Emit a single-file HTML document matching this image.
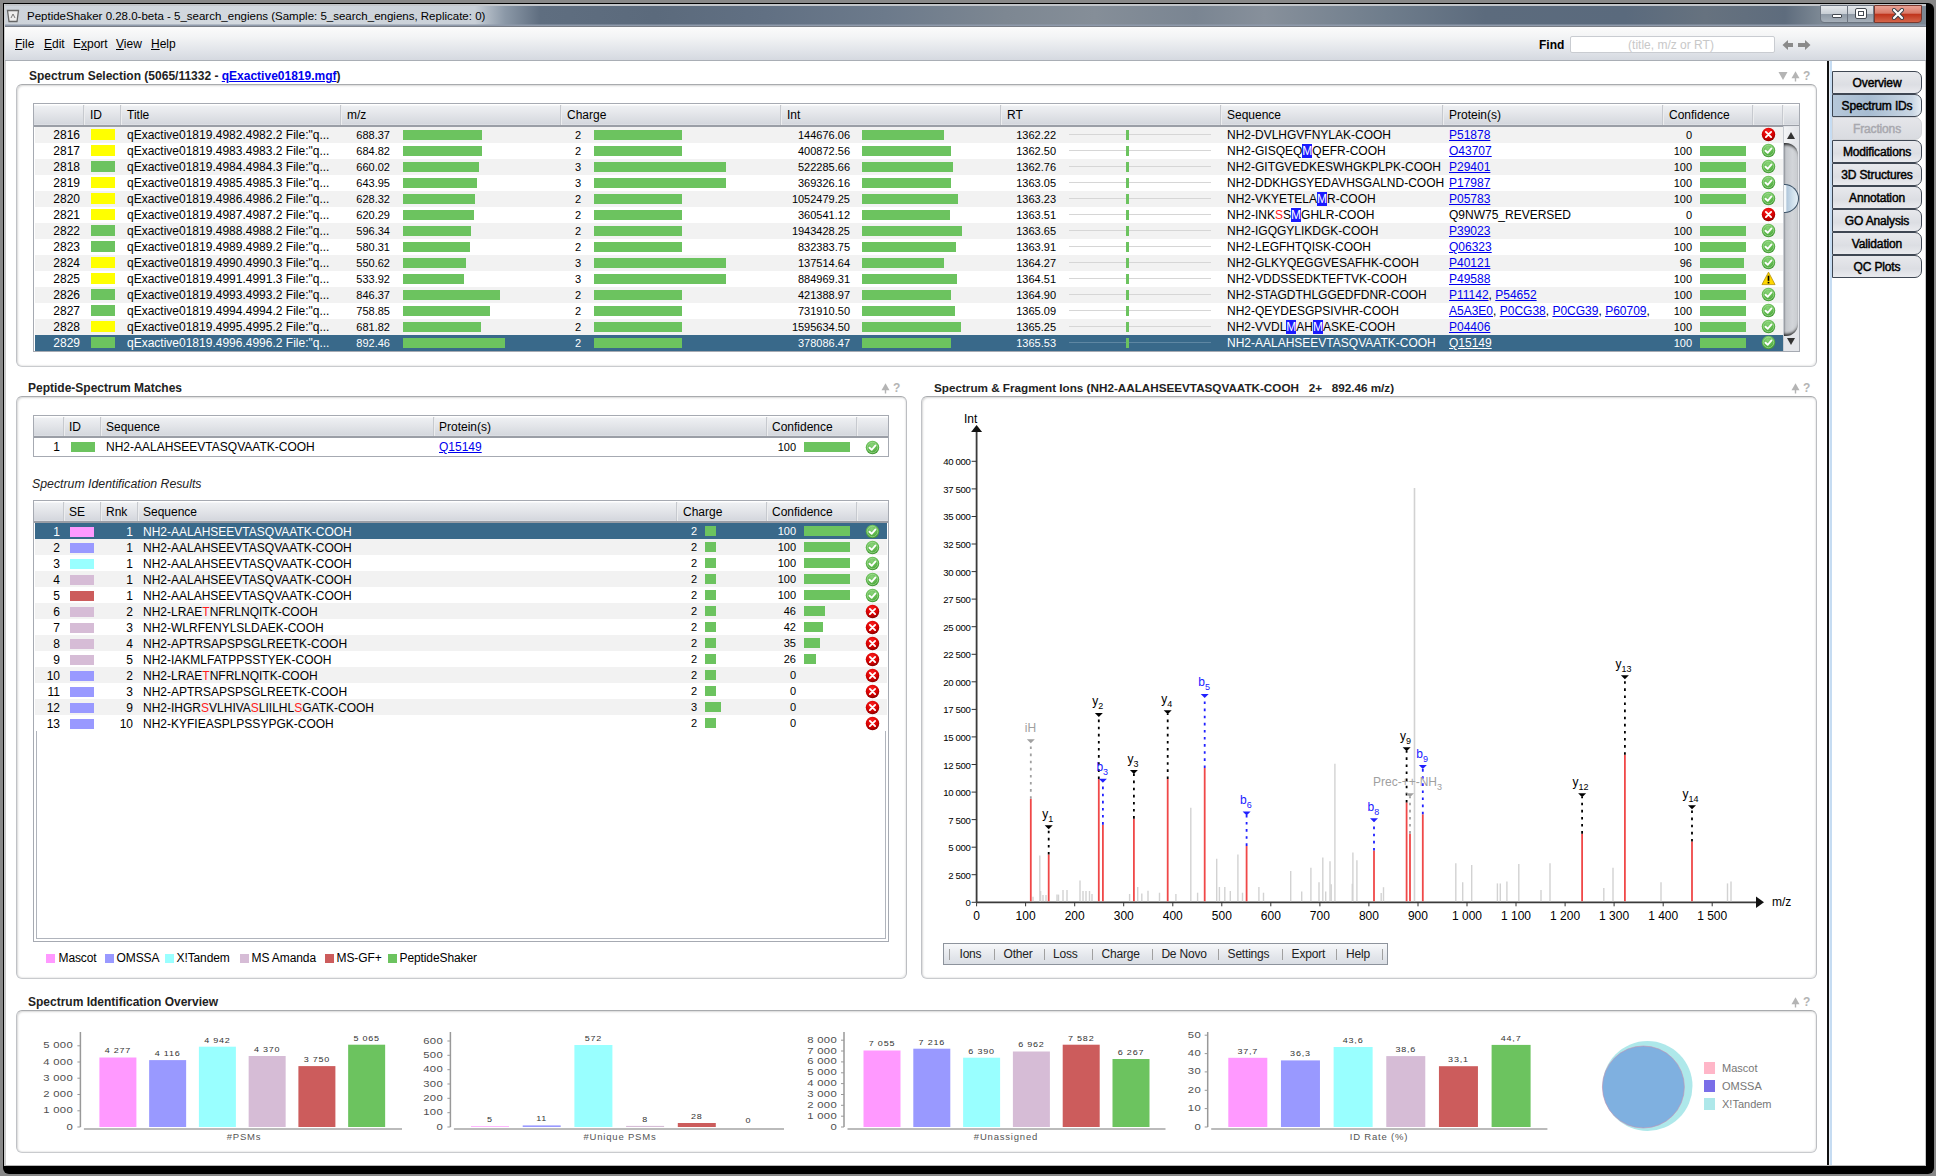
<!DOCTYPE html><html><head><meta charset="utf-8"><style>
html,body{margin:0;padding:0;}
body{width:1936px;height:1176px;position:relative;overflow:hidden;background:#888;font-family:"Liberation Sans", sans-serif;}
div{box-sizing:border-box;}
.hdr{background:linear-gradient(#fff 0,#fff 1px,#eef0f3 2px,#e3e5e9 45%,#d5d8de 85%,#e6e8ec 95%,#fff 100%);}
.lnk{color:#0000ee;text-decoration:underline;}
</style></head><body>
<svg width="0" height="0" style="position:absolute"><defs>
<radialGradient id="gr" cx="45%" cy="30%" r="75%"><stop offset="0" stop-color="#ff2020"/><stop offset="0.6" stop-color="#d40000"/><stop offset="1" stop-color="#7a0000"/></radialGradient>
<radialGradient id="gg" cx="45%" cy="30%" r="75%"><stop offset="0" stop-color="#8ad47a"/><stop offset="0.6" stop-color="#5cb54a"/><stop offset="1" stop-color="#3a8e2e"/></radialGradient>
<symbol id="ix" viewBox="0 0 16 16"><circle cx="8" cy="8" r="7.2" fill="url(#gr)"/><path d="M5.2 5.2 L10.8 10.8 M10.8 5.2 L5.2 10.8" stroke="#fff" stroke-width="2" stroke-linecap="round"/></symbol>
<symbol id="ic" viewBox="0 0 16 16"><circle cx="8" cy="8" r="7.2" fill="url(#gg)"/><circle cx="8" cy="8" r="5.6" fill="none" stroke="#a8e09a" stroke-width="0.7"/><path d="M4.8 8.2 L7.2 10.4 L11.2 5.8" fill="none" stroke="#fff" stroke-width="2" stroke-linecap="round" stroke-linejoin="round"/></symbol>
<symbol id="iw" viewBox="0 0 16 16"><path d="M8 1.2 L15 14.5 L1 14.5 Z" fill="#ffd600" stroke="#b08a00" stroke-width="0.8" stroke-linejoin="round"/><rect x="7.1" y="5" width="1.8" height="5.5" fill="#000"/><rect x="7.1" y="11.5" width="1.8" height="1.8" fill="#000"/></symbol>
</defs></svg>
<div style="position:absolute;left:3px;top:3px;width:1931px;height:1171px;background:#000;border-radius:0 6px 6px 6px;"></div>
<div style="position:absolute;left:4px;top:4px;width:1922px;height:1162px;background:#fff;border-left:2px solid #cdcdcd;border-bottom:1.5px solid #b8b8b8;border-right:1px solid #c8c8c8;"></div>
<div style="position:absolute;left:5px;top:4px;width:1921px;height:23px;background:linear-gradient(#c2c5c9 0,#c2c5c9 1.5px,rgba(255,255,255,0) 2px,rgba(255,255,255,0) 20px,#8f9aab 21px,#8f9aab 22px,#787d86 22px),linear-gradient(90deg,#cdd3da 0px,#d3d9df 250px,#c8cfd7 470px,#8b98a7 500px,#5f6e80 535px,#5b6a7c 650px,#617083 760px,#6c7a8b 880px,#7d8792 1000px,#858e98 1090px,#7a8592 1190px,#87909b 1260px,#6f7d8c 1380px,#5c6b7d 1480px,#5a6a7d 1620px,#66727f 1700px,#5e6c7d 1780px,#7c8894 1815px);"></div>
<div style="position:absolute;left:27px;top:10px;height:13px;line-height:13px;font-size:11.5px;color:#000;font-weight:normal;white-space:pre;">PeptideShaker 0.28.0-beta - 5_search_engiens (Sample: 5_search_engiens, Replicate: 0)</div>
<svg style="position:absolute;left:6px;top:9px" width="14" height="14" viewBox="0 0 14 14"><path d="M1.5 1.5 H12.5 L11 12.5 H3 Z" fill="#eee" stroke="#666" stroke-width="1.3"/><path d="M5 9 L7 5 L9 9" fill="none" stroke="#777" stroke-width="1"/></svg>
<div style="position:absolute;left:1820px;top:5px;width:28px;height:18px;background:linear-gradient(#e6e9ed,#c7cdd4 50%,#8f9aa6 52%,#a7b0ba);border:1px solid #6c7480;border-radius:0 0 0 4px;"></div>
<div style="position:absolute;left:1832px;top:14px;width:10px;height:4px;background:#fff;border:1px solid #444a52;border-radius:1px;"></div>
<div style="position:absolute;left:1848px;top:5px;width:26px;height:18px;background:linear-gradient(#e6e9ed,#c7cdd4 50%,#8f9aa6 52%,#a7b0ba);border:1px solid #6c7480;border-left:none;"></div>
<div style="position:absolute;left:1855px;top:8px;width:12px;height:11px;background:#fff;border:1.5px solid #444a52;border-radius:2px;"></div>
<div style="position:absolute;left:1858px;top:11px;width:6px;height:5px;background:#fff;border:1px solid #444a52;"></div>
<div style="position:absolute;left:1874px;top:5px;width:48px;height:18px;background:linear-gradient(#eba295,#d87a68 45%,#c0341c 52%,#d4654a);border:1px solid #7a3a30;border-radius:0 0 4px 0;"></div>
<svg style="position:absolute;left:1892px;top:8px" width="12" height="12" viewBox="0 0 12 12"><path d="M2 2 L10 10 M10 2 L2 10" stroke="#3a4048" stroke-width="4" stroke-linecap="round"/><path d="M2 2 L10 10 M10 2 L2 10" stroke="#fff" stroke-width="2.2" stroke-linecap="round"/></svg>
<div style="position:absolute;left:5px;top:27px;width:1921px;height:34px;background:linear-gradient(#fbfbfb 0,#f3f4f5 30%,#e2e5ea 70%,#d5d9e0 100%);border-bottom:1px solid #a9aeb5;"></div>
<div style="position:absolute;left:15px;top:37px;height:14px;line-height:14px;font-size:12px;color:#000;font-weight:normal;white-space:pre;"><u>F</u>ile</div>
<div style="position:absolute;left:44px;top:37px;height:14px;line-height:14px;font-size:12px;color:#000;font-weight:normal;white-space:pre;"><u>E</u>dit</div>
<div style="position:absolute;left:73px;top:37px;height:14px;line-height:14px;font-size:12px;color:#000;font-weight:normal;white-space:pre;">E<u>x</u>port</div>
<div style="position:absolute;left:116px;top:37px;height:14px;line-height:14px;font-size:12px;color:#000;font-weight:normal;white-space:pre;"><u>V</u>iew</div>
<div style="position:absolute;left:151px;top:37px;height:14px;line-height:14px;font-size:12px;color:#000;font-weight:normal;white-space:pre;"><u>H</u>elp</div>
<div style="position:absolute;left:1539px;top:38px;height:14px;line-height:14px;font-size:12px;color:#000;font-weight:bold;white-space:pre;">Find</div>
<div style="position:absolute;left:1570px;top:36px;width:205px;height:17px;background:#fff;border:1px solid #c9ccd1;border-radius:2px;"></div>
<div style="position:absolute;left:1371px;width:600px;top:38px;height:14px;line-height:14px;font-size:12px;color:#c8c8c8;font-weight:normal;text-align:center;white-space:pre;">(title, m/z or RT)</div>
<svg style="position:absolute;left:1782px;top:39px" width="30" height="12" viewBox="0 0 30 12"><path d="M0.5 6 L6 1 V4 H11 V8 H6 V11 Z" fill="#8a8a8a"/><path d="M28.5 6 L23 1 V4 H16 V8 H23 V11 Z" fill="#8a8a8a"/></svg>
<div style="position:absolute;left:1827px;top:61px;width:2px;height:1104px;background:#111;"></div>
<div style="position:absolute;left:1829px;top:61px;width:1px;height:1104px;background:#e8eef5;"></div>
<div style="position:absolute;left:1830px;top:61px;width:2px;height:1104px;background:#c6dcf2;"></div>
<div style="position:absolute;left:1832px;top:71px;width:90px;height:23px;background:linear-gradient(#e7e8ec,#dcdee3 60%,#e9eaee);border:1.5px solid #3f4753;border-radius:0 7px 7px 0;"></div>
<div style="position:absolute;left:1577px;width:600px;top:76px;height:14px;line-height:14px;font-size:12px;color:#000;font-weight:normal;text-align:center;white-space:pre;-webkit-text-stroke:0.45px #000;letter-spacing:-0.15px;">Overview</div>
<div style="position:absolute;left:1832px;top:94px;width:90px;height:23px;background:linear-gradient(90deg,#b6c8da,#a7bcd1 40%,#c9d6e3 90%,#e6edf3);border:1.5px solid #3f4753;border-radius:0 7px 7px 0;"></div>
<div style="position:absolute;left:1577px;width:600px;top:99px;height:14px;line-height:14px;font-size:12px;color:#000;font-weight:normal;text-align:center;white-space:pre;-webkit-text-stroke:0.45px #000;letter-spacing:-0.15px;">Spectrum IDs</div>
<div style="position:absolute;left:1832px;top:117px;width:90px;height:23px;background:linear-gradient(#e5e6ea,#d9dbe0);border:1px solid #d0d2d6;border-radius:0 7px 7px 0;"></div>
<div style="position:absolute;left:1577px;width:600px;top:122px;height:14px;line-height:14px;font-size:12px;color:#a8a8ae;font-weight:normal;text-align:center;white-space:pre;-webkit-text-stroke:0.45px #a8a8ae;letter-spacing:-0.15px;">Fractions</div>
<div style="position:absolute;left:1832px;top:140px;width:90px;height:23px;background:linear-gradient(#e7e8ec,#dcdee3 60%,#e9eaee);border:1.5px solid #3f4753;border-radius:0 7px 7px 0;"></div>
<div style="position:absolute;left:1577px;width:600px;top:145px;height:14px;line-height:14px;font-size:12px;color:#000;font-weight:normal;text-align:center;white-space:pre;-webkit-text-stroke:0.45px #000;letter-spacing:-0.15px;">Modifications</div>
<div style="position:absolute;left:1832px;top:163px;width:90px;height:23px;background:linear-gradient(#e7e8ec,#dcdee3 60%,#e9eaee);border:1.5px solid #3f4753;border-radius:0 7px 7px 0;"></div>
<div style="position:absolute;left:1577px;width:600px;top:168px;height:14px;line-height:14px;font-size:12px;color:#000;font-weight:normal;text-align:center;white-space:pre;-webkit-text-stroke:0.45px #000;letter-spacing:-0.15px;">3D Structures</div>
<div style="position:absolute;left:1832px;top:186px;width:90px;height:23px;background:linear-gradient(#e7e8ec,#dcdee3 60%,#e9eaee);border:1.5px solid #3f4753;border-radius:0 7px 7px 0;"></div>
<div style="position:absolute;left:1577px;width:600px;top:191px;height:14px;line-height:14px;font-size:12px;color:#000;font-weight:normal;text-align:center;white-space:pre;-webkit-text-stroke:0.45px #000;letter-spacing:-0.15px;">Annotation</div>
<div style="position:absolute;left:1832px;top:209px;width:90px;height:23px;background:linear-gradient(#e7e8ec,#dcdee3 60%,#e9eaee);border:1.5px solid #3f4753;border-radius:0 7px 7px 0;"></div>
<div style="position:absolute;left:1577px;width:600px;top:214px;height:14px;line-height:14px;font-size:12px;color:#000;font-weight:normal;text-align:center;white-space:pre;-webkit-text-stroke:0.45px #000;letter-spacing:-0.15px;">GO Analysis</div>
<div style="position:absolute;left:1832px;top:232px;width:90px;height:23px;background:linear-gradient(#e7e8ec,#dcdee3 60%,#e9eaee);border:1.5px solid #3f4753;border-radius:0 7px 7px 0;"></div>
<div style="position:absolute;left:1577px;width:600px;top:237px;height:14px;line-height:14px;font-size:12px;color:#000;font-weight:normal;text-align:center;white-space:pre;-webkit-text-stroke:0.45px #000;letter-spacing:-0.15px;">Validation</div>
<div style="position:absolute;left:1832px;top:255px;width:90px;height:23px;background:linear-gradient(#e7e8ec,#dcdee3 60%,#e9eaee);border:1.5px solid #3f4753;border-radius:0 7px 7px 0;"></div>
<div style="position:absolute;left:1577px;width:600px;top:260px;height:14px;line-height:14px;font-size:12px;color:#000;font-weight:normal;text-align:center;white-space:pre;-webkit-text-stroke:0.45px #000;letter-spacing:-0.15px;">QC Plots</div>
<div style="position:absolute;left:29px;top:69px;height:14px;line-height:14px;font-size:12px;color:#222;font-weight:bold;white-space:pre;">Spectrum Selection (5065/11332 - <span class="lnk">qExactive01819.mgf</span>)</div>
<div style="position:absolute;left:16px;top:84px;width:1801px;height:283px;border:1px solid #a4a7ab;border-color:#a9abae #bcbec2 #c9cbce #c0c2c6;border-radius:6px;box-shadow:inset 1px 1px 2px rgba(0,0,0,0.16),inset -1px -1px 1.5px rgba(0,0,0,0.07);background:#fff;"></div>
<svg style="position:absolute;left:1778px;top:71px" width="32" height="11" viewBox="0 0 32 11"><path d="M0.5 1 H9.5 L5 9 Z" fill="#b4b4b4"/><path d="M13.5 7.2 L17.5 0.2 L21.5 7.2 Z" fill="#b4b4b4"/><rect x="16.8" y="5" width="1.4" height="5.5" fill="#b4b4b4"/></svg>
<div style="position:absolute;left:1803px;top:69px;font-size:12px;line-height:14px;color:#b4b4b4;font-weight:bold">?</div>
<div style="position:absolute;left:33px;top:103px;width:1767px;height:249px;border:1px solid #a6aab2;background:#fff;"></div>
<div style="position:absolute;left:34px;top:104px;width:1765px;height:23px;"></div>
<div class="hdr" style="position:absolute;left:34px;top:104px;width:1765px;height:23px;"></div>
<div style="position:absolute;left:34px;top:125px;width:1765px;height:2px;background:#9a9ea6;"></div>
<div style="position:absolute;left:83px;top:105px;width:2px;height:20px;background:linear-gradient(90deg,#b4b8bf,#fff);"></div>
<div style="position:absolute;left:120px;top:105px;width:2px;height:20px;background:linear-gradient(90deg,#b4b8bf,#fff);"></div>
<div style="position:absolute;left:340px;top:105px;width:2px;height:20px;background:linear-gradient(90deg,#b4b8bf,#fff);"></div>
<div style="position:absolute;left:560px;top:105px;width:2px;height:20px;background:linear-gradient(90deg,#b4b8bf,#fff);"></div>
<div style="position:absolute;left:780px;top:105px;width:2px;height:20px;background:linear-gradient(90deg,#b4b8bf,#fff);"></div>
<div style="position:absolute;left:1000px;top:105px;width:2px;height:20px;background:linear-gradient(90deg,#b4b8bf,#fff);"></div>
<div style="position:absolute;left:1220px;top:105px;width:2px;height:20px;background:linear-gradient(90deg,#b4b8bf,#fff);"></div>
<div style="position:absolute;left:1442px;top:105px;width:2px;height:20px;background:linear-gradient(90deg,#b4b8bf,#fff);"></div>
<div style="position:absolute;left:1662px;top:105px;width:2px;height:20px;background:linear-gradient(90deg,#b4b8bf,#fff);"></div>
<div style="position:absolute;left:1752px;top:105px;width:2px;height:20px;background:linear-gradient(90deg,#b4b8bf,#fff);"></div>
<div style="position:absolute;left:1782px;top:105px;width:2px;height:20px;background:linear-gradient(90deg,#b4b8bf,#fff);"></div>
<div style="position:absolute;left:90px;top:108px;height:14px;line-height:14px;font-size:12px;color:#000;font-weight:normal;white-space:pre;">ID</div>
<div style="position:absolute;left:127px;top:108px;height:14px;line-height:14px;font-size:12px;color:#000;font-weight:normal;white-space:pre;">Title</div>
<div style="position:absolute;left:347px;top:108px;height:14px;line-height:14px;font-size:12px;color:#000;font-weight:normal;white-space:pre;">m/z</div>
<div style="position:absolute;left:567px;top:108px;height:14px;line-height:14px;font-size:12px;color:#000;font-weight:normal;white-space:pre;">Charge</div>
<div style="position:absolute;left:787px;top:108px;height:14px;line-height:14px;font-size:12px;color:#000;font-weight:normal;white-space:pre;">Int</div>
<div style="position:absolute;left:1007px;top:108px;height:14px;line-height:14px;font-size:12px;color:#000;font-weight:normal;white-space:pre;">RT</div>
<div style="position:absolute;left:1227px;top:108px;height:14px;line-height:14px;font-size:12px;color:#000;font-weight:normal;white-space:pre;">Sequence</div>
<div style="position:absolute;left:1449px;top:108px;height:14px;line-height:14px;font-size:12px;color:#000;font-weight:normal;white-space:pre;">Protein(s)</div>
<div style="position:absolute;left:1669px;top:108px;height:14px;line-height:14px;font-size:12px;color:#000;font-weight:normal;white-space:pre;">Confidence</div>
<div style="position:absolute;left:35px;top:127px;width:1748px;height:16px;background:#f2f2f2;"></div>
<div style="position:absolute;left:-320px;width:400px;top:128px;height:14px;line-height:14px;font-size:12px;color:#000;font-weight:normal;text-align:right;white-space:pre;">2816</div>
<div style="position:absolute;left:91px;top:129px;width:24px;height:11px;background:#ffff00;"></div>
<div style="position:absolute;left:127px;top:128px;height:14px;line-height:14px;font-size:12px;color:#000;font-weight:normal;white-space:pre;">qExactive01819.4982.4982.2 File:"q...</div>
<div style="position:absolute;left:-10px;width:400px;top:129px;height:13px;line-height:13px;font-size:11px;color:#000;font-weight:normal;text-align:right;white-space:pre;">688.37</div>
<div style="position:absolute;left:403px;top:130px;width:79px;height:10px;background:#6cc35f;"></div>
<div style="position:absolute;left:181px;width:400px;top:129px;height:13px;line-height:13px;font-size:11px;color:#000;font-weight:normal;text-align:right;white-space:pre;">2</div>
<div style="position:absolute;left:594px;top:130px;width:88px;height:10px;background:#6cc35f;"></div>
<div style="position:absolute;left:450px;width:400px;top:129px;height:13px;line-height:13px;font-size:11px;color:#000;font-weight:normal;text-align:right;white-space:pre;">144676.06</div>
<div style="position:absolute;left:862px;top:130px;width:82px;height:10px;background:#6cc35f;"></div>
<div style="position:absolute;left:656px;width:400px;top:129px;height:13px;line-height:13px;font-size:11px;color:#000;font-weight:normal;text-align:right;white-space:pre;">1362.22</div>
<div style="position:absolute;left:1069px;top:134px;width:142px;height:1px;background:#d6d6d6;"></div>
<div style="position:absolute;left:1126px;top:130px;width:3px;height:10px;background:#6cc35f;"></div>
<div style="position:absolute;left:1227px;top:128px;height:14px;line-height:14px;font-size:12px;color:#000;font-weight:normal;white-space:pre;">NH2-DVLHGVFNYLAK-COOH</div>
<div style="position:absolute;left:1449px;top:128px;height:14px;line-height:14px;font-size:12px;color:#000;font-weight:normal;white-space:pre;"><span style="color:#0000ee;text-decoration:underline">P51878</span></div>
<div style="position:absolute;left:1292px;width:400px;top:129px;height:13px;line-height:13px;font-size:11px;color:#000;font-weight:normal;text-align:right;white-space:pre;">0</div>
<svg style="position:absolute;left:1760.5px;top:127.0px" width="15" height="15"><use href="#ix"/></svg>
<div style="position:absolute;left:35px;top:143px;width:1748px;height:16px;background:#fff;"></div>
<div style="position:absolute;left:-320px;width:400px;top:144px;height:14px;line-height:14px;font-size:12px;color:#000;font-weight:normal;text-align:right;white-space:pre;">2817</div>
<div style="position:absolute;left:91px;top:145px;width:24px;height:11px;background:#ffff00;"></div>
<div style="position:absolute;left:127px;top:144px;height:14px;line-height:14px;font-size:12px;color:#000;font-weight:normal;white-space:pre;">qExactive01819.4983.4983.2 File:"q...</div>
<div style="position:absolute;left:-10px;width:400px;top:145px;height:13px;line-height:13px;font-size:11px;color:#000;font-weight:normal;text-align:right;white-space:pre;">684.82</div>
<div style="position:absolute;left:403px;top:146px;width:79px;height:10px;background:#6cc35f;"></div>
<div style="position:absolute;left:181px;width:400px;top:145px;height:13px;line-height:13px;font-size:11px;color:#000;font-weight:normal;text-align:right;white-space:pre;">2</div>
<div style="position:absolute;left:594px;top:146px;width:88px;height:10px;background:#6cc35f;"></div>
<div style="position:absolute;left:450px;width:400px;top:145px;height:13px;line-height:13px;font-size:11px;color:#000;font-weight:normal;text-align:right;white-space:pre;">400872.56</div>
<div style="position:absolute;left:862px;top:146px;width:89px;height:10px;background:#6cc35f;"></div>
<div style="position:absolute;left:656px;width:400px;top:145px;height:13px;line-height:13px;font-size:11px;color:#000;font-weight:normal;text-align:right;white-space:pre;">1362.50</div>
<div style="position:absolute;left:1069px;top:150px;width:142px;height:1px;background:#d6d6d6;"></div>
<div style="position:absolute;left:1126px;top:146px;width:3px;height:10px;background:#6cc35f;"></div>
<div style="position:absolute;left:1227px;top:144px;height:14px;line-height:14px;font-size:12px;color:#000;font-weight:normal;white-space:pre;">NH2-GISQEQ<span style="background:#1a1aff;color:#fff">M</span>QEFR-COOH</div>
<div style="position:absolute;left:1449px;top:144px;height:14px;line-height:14px;font-size:12px;color:#000;font-weight:normal;white-space:pre;"><span style="color:#0000ee;text-decoration:underline">O43707</span></div>
<div style="position:absolute;left:1292px;width:400px;top:145px;height:13px;line-height:13px;font-size:11px;color:#000;font-weight:normal;text-align:right;white-space:pre;">100</div>
<div style="position:absolute;left:1700px;top:146px;width:46px;height:10px;background:#6cc35f;"></div>
<svg style="position:absolute;left:1760.5px;top:143.0px" width="15" height="15"><use href="#ic"/></svg>
<div style="position:absolute;left:35px;top:159px;width:1748px;height:16px;background:#f2f2f2;"></div>
<div style="position:absolute;left:-320px;width:400px;top:160px;height:14px;line-height:14px;font-size:12px;color:#000;font-weight:normal;text-align:right;white-space:pre;">2818</div>
<div style="position:absolute;left:91px;top:161px;width:24px;height:11px;background:#6cc35f;"></div>
<div style="position:absolute;left:127px;top:160px;height:14px;line-height:14px;font-size:12px;color:#000;font-weight:normal;white-space:pre;">qExactive01819.4984.4984.3 File:"q...</div>
<div style="position:absolute;left:-10px;width:400px;top:161px;height:13px;line-height:13px;font-size:11px;color:#000;font-weight:normal;text-align:right;white-space:pre;">660.02</div>
<div style="position:absolute;left:403px;top:162px;width:76px;height:10px;background:#6cc35f;"></div>
<div style="position:absolute;left:181px;width:400px;top:161px;height:13px;line-height:13px;font-size:11px;color:#000;font-weight:normal;text-align:right;white-space:pre;">3</div>
<div style="position:absolute;left:594px;top:162px;width:132px;height:10px;background:#6cc35f;"></div>
<div style="position:absolute;left:450px;width:400px;top:161px;height:13px;line-height:13px;font-size:11px;color:#000;font-weight:normal;text-align:right;white-space:pre;">522285.66</div>
<div style="position:absolute;left:862px;top:162px;width:91px;height:10px;background:#6cc35f;"></div>
<div style="position:absolute;left:656px;width:400px;top:161px;height:13px;line-height:13px;font-size:11px;color:#000;font-weight:normal;text-align:right;white-space:pre;">1362.76</div>
<div style="position:absolute;left:1069px;top:166px;width:142px;height:1px;background:#d6d6d6;"></div>
<div style="position:absolute;left:1126px;top:162px;width:3px;height:10px;background:#6cc35f;"></div>
<div style="position:absolute;left:1227px;top:160px;height:14px;line-height:14px;font-size:12px;color:#000;font-weight:normal;white-space:pre;">NH2-GITGVEDKESWHGKPLPK-COOH</div>
<div style="position:absolute;left:1449px;top:160px;height:14px;line-height:14px;font-size:12px;color:#000;font-weight:normal;white-space:pre;"><span style="color:#0000ee;text-decoration:underline">P29401</span></div>
<div style="position:absolute;left:1292px;width:400px;top:161px;height:13px;line-height:13px;font-size:11px;color:#000;font-weight:normal;text-align:right;white-space:pre;">100</div>
<div style="position:absolute;left:1700px;top:162px;width:46px;height:10px;background:#6cc35f;"></div>
<svg style="position:absolute;left:1760.5px;top:159.0px" width="15" height="15"><use href="#ic"/></svg>
<div style="position:absolute;left:35px;top:175px;width:1748px;height:16px;background:#fff;"></div>
<div style="position:absolute;left:-320px;width:400px;top:176px;height:14px;line-height:14px;font-size:12px;color:#000;font-weight:normal;text-align:right;white-space:pre;">2819</div>
<div style="position:absolute;left:91px;top:177px;width:24px;height:11px;background:#ffff00;"></div>
<div style="position:absolute;left:127px;top:176px;height:14px;line-height:14px;font-size:12px;color:#000;font-weight:normal;white-space:pre;">qExactive01819.4985.4985.3 File:"q...</div>
<div style="position:absolute;left:-10px;width:400px;top:177px;height:13px;line-height:13px;font-size:11px;color:#000;font-weight:normal;text-align:right;white-space:pre;">643.95</div>
<div style="position:absolute;left:403px;top:178px;width:74px;height:10px;background:#6cc35f;"></div>
<div style="position:absolute;left:181px;width:400px;top:177px;height:13px;line-height:13px;font-size:11px;color:#000;font-weight:normal;text-align:right;white-space:pre;">3</div>
<div style="position:absolute;left:594px;top:178px;width:132px;height:10px;background:#6cc35f;"></div>
<div style="position:absolute;left:450px;width:400px;top:177px;height:13px;line-height:13px;font-size:11px;color:#000;font-weight:normal;text-align:right;white-space:pre;">369326.16</div>
<div style="position:absolute;left:862px;top:178px;width:89px;height:10px;background:#6cc35f;"></div>
<div style="position:absolute;left:656px;width:400px;top:177px;height:13px;line-height:13px;font-size:11px;color:#000;font-weight:normal;text-align:right;white-space:pre;">1363.05</div>
<div style="position:absolute;left:1069px;top:182px;width:142px;height:1px;background:#d6d6d6;"></div>
<div style="position:absolute;left:1126px;top:178px;width:3px;height:10px;background:#6cc35f;"></div>
<div style="position:absolute;left:1227px;top:176px;height:14px;line-height:14px;font-size:12px;color:#000;font-weight:normal;white-space:pre;">NH2-DDKHGSYEDAVHSGALND-COOH</div>
<div style="position:absolute;left:1449px;top:176px;height:14px;line-height:14px;font-size:12px;color:#000;font-weight:normal;white-space:pre;"><span style="color:#0000ee;text-decoration:underline">P17987</span></div>
<div style="position:absolute;left:1292px;width:400px;top:177px;height:13px;line-height:13px;font-size:11px;color:#000;font-weight:normal;text-align:right;white-space:pre;">100</div>
<div style="position:absolute;left:1700px;top:178px;width:46px;height:10px;background:#6cc35f;"></div>
<svg style="position:absolute;left:1760.5px;top:175.0px" width="15" height="15"><use href="#ic"/></svg>
<div style="position:absolute;left:35px;top:191px;width:1748px;height:16px;background:#f2f2f2;"></div>
<div style="position:absolute;left:-320px;width:400px;top:192px;height:14px;line-height:14px;font-size:12px;color:#000;font-weight:normal;text-align:right;white-space:pre;">2820</div>
<div style="position:absolute;left:91px;top:193px;width:24px;height:11px;background:#ffff00;"></div>
<div style="position:absolute;left:127px;top:192px;height:14px;line-height:14px;font-size:12px;color:#000;font-weight:normal;white-space:pre;">qExactive01819.4986.4986.2 File:"q...</div>
<div style="position:absolute;left:-10px;width:400px;top:193px;height:13px;line-height:13px;font-size:11px;color:#000;font-weight:normal;text-align:right;white-space:pre;">628.32</div>
<div style="position:absolute;left:403px;top:194px;width:72px;height:10px;background:#6cc35f;"></div>
<div style="position:absolute;left:181px;width:400px;top:193px;height:13px;line-height:13px;font-size:11px;color:#000;font-weight:normal;text-align:right;white-space:pre;">2</div>
<div style="position:absolute;left:594px;top:194px;width:88px;height:10px;background:#6cc35f;"></div>
<div style="position:absolute;left:450px;width:400px;top:193px;height:13px;line-height:13px;font-size:11px;color:#000;font-weight:normal;text-align:right;white-space:pre;">1052479.25</div>
<div style="position:absolute;left:862px;top:194px;width:96px;height:10px;background:#6cc35f;"></div>
<div style="position:absolute;left:656px;width:400px;top:193px;height:13px;line-height:13px;font-size:11px;color:#000;font-weight:normal;text-align:right;white-space:pre;">1363.23</div>
<div style="position:absolute;left:1069px;top:198px;width:142px;height:1px;background:#d6d6d6;"></div>
<div style="position:absolute;left:1126px;top:194px;width:3px;height:10px;background:#6cc35f;"></div>
<div style="position:absolute;left:1227px;top:192px;height:14px;line-height:14px;font-size:12px;color:#000;font-weight:normal;white-space:pre;">NH2-VKYETELA<span style="background:#1a1aff;color:#fff">M</span>R-COOH</div>
<div style="position:absolute;left:1449px;top:192px;height:14px;line-height:14px;font-size:12px;color:#000;font-weight:normal;white-space:pre;"><span style="color:#0000ee;text-decoration:underline">P05783</span></div>
<div style="position:absolute;left:1292px;width:400px;top:193px;height:13px;line-height:13px;font-size:11px;color:#000;font-weight:normal;text-align:right;white-space:pre;">100</div>
<div style="position:absolute;left:1700px;top:194px;width:46px;height:10px;background:#6cc35f;"></div>
<svg style="position:absolute;left:1760.5px;top:191.0px" width="15" height="15"><use href="#ic"/></svg>
<div style="position:absolute;left:35px;top:207px;width:1748px;height:16px;background:#fff;"></div>
<div style="position:absolute;left:-320px;width:400px;top:208px;height:14px;line-height:14px;font-size:12px;color:#000;font-weight:normal;text-align:right;white-space:pre;">2821</div>
<div style="position:absolute;left:91px;top:209px;width:24px;height:11px;background:#ffff00;"></div>
<div style="position:absolute;left:127px;top:208px;height:14px;line-height:14px;font-size:12px;color:#000;font-weight:normal;white-space:pre;">qExactive01819.4987.4987.2 File:"q...</div>
<div style="position:absolute;left:-10px;width:400px;top:209px;height:13px;line-height:13px;font-size:11px;color:#000;font-weight:normal;text-align:right;white-space:pre;">620.29</div>
<div style="position:absolute;left:403px;top:210px;width:71px;height:10px;background:#6cc35f;"></div>
<div style="position:absolute;left:181px;width:400px;top:209px;height:13px;line-height:13px;font-size:11px;color:#000;font-weight:normal;text-align:right;white-space:pre;">2</div>
<div style="position:absolute;left:594px;top:210px;width:88px;height:10px;background:#6cc35f;"></div>
<div style="position:absolute;left:450px;width:400px;top:209px;height:13px;line-height:13px;font-size:11px;color:#000;font-weight:normal;text-align:right;white-space:pre;">360541.12</div>
<div style="position:absolute;left:862px;top:210px;width:88px;height:10px;background:#6cc35f;"></div>
<div style="position:absolute;left:656px;width:400px;top:209px;height:13px;line-height:13px;font-size:11px;color:#000;font-weight:normal;text-align:right;white-space:pre;">1363.51</div>
<div style="position:absolute;left:1069px;top:214px;width:142px;height:1px;background:#d6d6d6;"></div>
<div style="position:absolute;left:1126px;top:210px;width:3px;height:10px;background:#6cc35f;"></div>
<div style="position:absolute;left:1227px;top:208px;height:14px;line-height:14px;font-size:12px;color:#000;font-weight:normal;white-space:pre;">NH2-INK<span style="color:#ff2020">S</span>S<span style="background:#1a1aff;color:#fff">M</span>GHLR-COOH</div>
<div style="position:absolute;left:1449px;top:208px;height:14px;line-height:14px;font-size:12px;color:#000;font-weight:normal;white-space:pre;">Q9NW75_REVERSED</div>
<div style="position:absolute;left:1292px;width:400px;top:209px;height:13px;line-height:13px;font-size:11px;color:#000;font-weight:normal;text-align:right;white-space:pre;">0</div>
<svg style="position:absolute;left:1760.5px;top:207.0px" width="15" height="15"><use href="#ix"/></svg>
<div style="position:absolute;left:35px;top:223px;width:1748px;height:16px;background:#f2f2f2;"></div>
<div style="position:absolute;left:-320px;width:400px;top:224px;height:14px;line-height:14px;font-size:12px;color:#000;font-weight:normal;text-align:right;white-space:pre;">2822</div>
<div style="position:absolute;left:91px;top:225px;width:24px;height:11px;background:#6cc35f;"></div>
<div style="position:absolute;left:127px;top:224px;height:14px;line-height:14px;font-size:12px;color:#000;font-weight:normal;white-space:pre;">qExactive01819.4988.4988.2 File:"q...</div>
<div style="position:absolute;left:-10px;width:400px;top:225px;height:13px;line-height:13px;font-size:11px;color:#000;font-weight:normal;text-align:right;white-space:pre;">596.34</div>
<div style="position:absolute;left:403px;top:226px;width:68px;height:10px;background:#6cc35f;"></div>
<div style="position:absolute;left:181px;width:400px;top:225px;height:13px;line-height:13px;font-size:11px;color:#000;font-weight:normal;text-align:right;white-space:pre;">2</div>
<div style="position:absolute;left:594px;top:226px;width:88px;height:10px;background:#6cc35f;"></div>
<div style="position:absolute;left:450px;width:400px;top:225px;height:13px;line-height:13px;font-size:11px;color:#000;font-weight:normal;text-align:right;white-space:pre;">1943428.25</div>
<div style="position:absolute;left:862px;top:226px;width:100px;height:10px;background:#6cc35f;"></div>
<div style="position:absolute;left:656px;width:400px;top:225px;height:13px;line-height:13px;font-size:11px;color:#000;font-weight:normal;text-align:right;white-space:pre;">1363.65</div>
<div style="position:absolute;left:1069px;top:230px;width:142px;height:1px;background:#d6d6d6;"></div>
<div style="position:absolute;left:1126px;top:226px;width:3px;height:10px;background:#6cc35f;"></div>
<div style="position:absolute;left:1227px;top:224px;height:14px;line-height:14px;font-size:12px;color:#000;font-weight:normal;white-space:pre;">NH2-IGQGYLIKDGK-COOH</div>
<div style="position:absolute;left:1449px;top:224px;height:14px;line-height:14px;font-size:12px;color:#000;font-weight:normal;white-space:pre;"><span style="color:#0000ee;text-decoration:underline">P39023</span></div>
<div style="position:absolute;left:1292px;width:400px;top:225px;height:13px;line-height:13px;font-size:11px;color:#000;font-weight:normal;text-align:right;white-space:pre;">100</div>
<div style="position:absolute;left:1700px;top:226px;width:46px;height:10px;background:#6cc35f;"></div>
<svg style="position:absolute;left:1760.5px;top:223.0px" width="15" height="15"><use href="#ic"/></svg>
<div style="position:absolute;left:35px;top:239px;width:1748px;height:16px;background:#fff;"></div>
<div style="position:absolute;left:-320px;width:400px;top:240px;height:14px;line-height:14px;font-size:12px;color:#000;font-weight:normal;text-align:right;white-space:pre;">2823</div>
<div style="position:absolute;left:91px;top:241px;width:24px;height:11px;background:#6cc35f;"></div>
<div style="position:absolute;left:127px;top:240px;height:14px;line-height:14px;font-size:12px;color:#000;font-weight:normal;white-space:pre;">qExactive01819.4989.4989.2 File:"q...</div>
<div style="position:absolute;left:-10px;width:400px;top:241px;height:13px;line-height:13px;font-size:11px;color:#000;font-weight:normal;text-align:right;white-space:pre;">580.31</div>
<div style="position:absolute;left:403px;top:242px;width:67px;height:10px;background:#6cc35f;"></div>
<div style="position:absolute;left:181px;width:400px;top:241px;height:13px;line-height:13px;font-size:11px;color:#000;font-weight:normal;text-align:right;white-space:pre;">2</div>
<div style="position:absolute;left:594px;top:242px;width:88px;height:10px;background:#6cc35f;"></div>
<div style="position:absolute;left:450px;width:400px;top:241px;height:13px;line-height:13px;font-size:11px;color:#000;font-weight:normal;text-align:right;white-space:pre;">832383.75</div>
<div style="position:absolute;left:862px;top:242px;width:94px;height:10px;background:#6cc35f;"></div>
<div style="position:absolute;left:656px;width:400px;top:241px;height:13px;line-height:13px;font-size:11px;color:#000;font-weight:normal;text-align:right;white-space:pre;">1363.91</div>
<div style="position:absolute;left:1069px;top:246px;width:142px;height:1px;background:#d6d6d6;"></div>
<div style="position:absolute;left:1126px;top:242px;width:3px;height:10px;background:#6cc35f;"></div>
<div style="position:absolute;left:1227px;top:240px;height:14px;line-height:14px;font-size:12px;color:#000;font-weight:normal;white-space:pre;">NH2-LEGFHTQISK-COOH</div>
<div style="position:absolute;left:1449px;top:240px;height:14px;line-height:14px;font-size:12px;color:#000;font-weight:normal;white-space:pre;"><span style="color:#0000ee;text-decoration:underline">Q06323</span></div>
<div style="position:absolute;left:1292px;width:400px;top:241px;height:13px;line-height:13px;font-size:11px;color:#000;font-weight:normal;text-align:right;white-space:pre;">100</div>
<div style="position:absolute;left:1700px;top:242px;width:46px;height:10px;background:#6cc35f;"></div>
<svg style="position:absolute;left:1760.5px;top:239.0px" width="15" height="15"><use href="#ic"/></svg>
<div style="position:absolute;left:35px;top:255px;width:1748px;height:16px;background:#f2f2f2;"></div>
<div style="position:absolute;left:-320px;width:400px;top:256px;height:14px;line-height:14px;font-size:12px;color:#000;font-weight:normal;text-align:right;white-space:pre;">2824</div>
<div style="position:absolute;left:91px;top:257px;width:24px;height:11px;background:#ffff00;"></div>
<div style="position:absolute;left:127px;top:256px;height:14px;line-height:14px;font-size:12px;color:#000;font-weight:normal;white-space:pre;">qExactive01819.4990.4990.3 File:"q...</div>
<div style="position:absolute;left:-10px;width:400px;top:257px;height:13px;line-height:13px;font-size:11px;color:#000;font-weight:normal;text-align:right;white-space:pre;">550.62</div>
<div style="position:absolute;left:403px;top:258px;width:63px;height:10px;background:#6cc35f;"></div>
<div style="position:absolute;left:181px;width:400px;top:257px;height:13px;line-height:13px;font-size:11px;color:#000;font-weight:normal;text-align:right;white-space:pre;">3</div>
<div style="position:absolute;left:594px;top:258px;width:132px;height:10px;background:#6cc35f;"></div>
<div style="position:absolute;left:450px;width:400px;top:257px;height:13px;line-height:13px;font-size:11px;color:#000;font-weight:normal;text-align:right;white-space:pre;">137514.64</div>
<div style="position:absolute;left:862px;top:258px;width:82px;height:10px;background:#6cc35f;"></div>
<div style="position:absolute;left:656px;width:400px;top:257px;height:13px;line-height:13px;font-size:11px;color:#000;font-weight:normal;text-align:right;white-space:pre;">1364.27</div>
<div style="position:absolute;left:1069px;top:262px;width:142px;height:1px;background:#d6d6d6;"></div>
<div style="position:absolute;left:1126px;top:258px;width:3px;height:10px;background:#6cc35f;"></div>
<div style="position:absolute;left:1227px;top:256px;height:14px;line-height:14px;font-size:12px;color:#000;font-weight:normal;white-space:pre;">NH2-GLKYQEGGVESAFHK-COOH</div>
<div style="position:absolute;left:1449px;top:256px;height:14px;line-height:14px;font-size:12px;color:#000;font-weight:normal;white-space:pre;"><span style="color:#0000ee;text-decoration:underline">P40121</span></div>
<div style="position:absolute;left:1292px;width:400px;top:257px;height:13px;line-height:13px;font-size:11px;color:#000;font-weight:normal;text-align:right;white-space:pre;">96</div>
<div style="position:absolute;left:1700px;top:258px;width:44px;height:10px;background:#6cc35f;"></div>
<svg style="position:absolute;left:1760.5px;top:255.0px" width="15" height="15"><use href="#ic"/></svg>
<div style="position:absolute;left:35px;top:271px;width:1748px;height:16px;background:#fff;"></div>
<div style="position:absolute;left:-320px;width:400px;top:272px;height:14px;line-height:14px;font-size:12px;color:#000;font-weight:normal;text-align:right;white-space:pre;">2825</div>
<div style="position:absolute;left:91px;top:273px;width:24px;height:11px;background:#ffff00;"></div>
<div style="position:absolute;left:127px;top:272px;height:14px;line-height:14px;font-size:12px;color:#000;font-weight:normal;white-space:pre;">qExactive01819.4991.4991.3 File:"q...</div>
<div style="position:absolute;left:-10px;width:400px;top:273px;height:13px;line-height:13px;font-size:11px;color:#000;font-weight:normal;text-align:right;white-space:pre;">533.92</div>
<div style="position:absolute;left:403px;top:274px;width:61px;height:10px;background:#6cc35f;"></div>
<div style="position:absolute;left:181px;width:400px;top:273px;height:13px;line-height:13px;font-size:11px;color:#000;font-weight:normal;text-align:right;white-space:pre;">3</div>
<div style="position:absolute;left:594px;top:274px;width:132px;height:10px;background:#6cc35f;"></div>
<div style="position:absolute;left:450px;width:400px;top:273px;height:13px;line-height:13px;font-size:11px;color:#000;font-weight:normal;text-align:right;white-space:pre;">884969.31</div>
<div style="position:absolute;left:862px;top:274px;width:95px;height:10px;background:#6cc35f;"></div>
<div style="position:absolute;left:656px;width:400px;top:273px;height:13px;line-height:13px;font-size:11px;color:#000;font-weight:normal;text-align:right;white-space:pre;">1364.51</div>
<div style="position:absolute;left:1069px;top:278px;width:142px;height:1px;background:#d6d6d6;"></div>
<div style="position:absolute;left:1126px;top:274px;width:3px;height:10px;background:#6cc35f;"></div>
<div style="position:absolute;left:1227px;top:272px;height:14px;line-height:14px;font-size:12px;color:#000;font-weight:normal;white-space:pre;">NH2-VDDSSEDKTEFTVK-COOH</div>
<div style="position:absolute;left:1449px;top:272px;height:14px;line-height:14px;font-size:12px;color:#000;font-weight:normal;white-space:pre;"><span style="color:#0000ee;text-decoration:underline">P49588</span></div>
<div style="position:absolute;left:1292px;width:400px;top:273px;height:13px;line-height:13px;font-size:11px;color:#000;font-weight:normal;text-align:right;white-space:pre;">100</div>
<div style="position:absolute;left:1700px;top:274px;width:46px;height:10px;background:#6cc35f;"></div>
<svg style="position:absolute;left:1760.5px;top:271.0px" width="15" height="15"><use href="#iw"/></svg>
<div style="position:absolute;left:35px;top:287px;width:1748px;height:16px;background:#f2f2f2;"></div>
<div style="position:absolute;left:-320px;width:400px;top:288px;height:14px;line-height:14px;font-size:12px;color:#000;font-weight:normal;text-align:right;white-space:pre;">2826</div>
<div style="position:absolute;left:91px;top:289px;width:24px;height:11px;background:#6cc35f;"></div>
<div style="position:absolute;left:127px;top:288px;height:14px;line-height:14px;font-size:12px;color:#000;font-weight:normal;white-space:pre;">qExactive01819.4993.4993.2 File:"q...</div>
<div style="position:absolute;left:-10px;width:400px;top:289px;height:13px;line-height:13px;font-size:11px;color:#000;font-weight:normal;text-align:right;white-space:pre;">846.37</div>
<div style="position:absolute;left:403px;top:290px;width:97px;height:10px;background:#6cc35f;"></div>
<div style="position:absolute;left:181px;width:400px;top:289px;height:13px;line-height:13px;font-size:11px;color:#000;font-weight:normal;text-align:right;white-space:pre;">2</div>
<div style="position:absolute;left:594px;top:290px;width:88px;height:10px;background:#6cc35f;"></div>
<div style="position:absolute;left:450px;width:400px;top:289px;height:13px;line-height:13px;font-size:11px;color:#000;font-weight:normal;text-align:right;white-space:pre;">421388.97</div>
<div style="position:absolute;left:862px;top:290px;width:89px;height:10px;background:#6cc35f;"></div>
<div style="position:absolute;left:656px;width:400px;top:289px;height:13px;line-height:13px;font-size:11px;color:#000;font-weight:normal;text-align:right;white-space:pre;">1364.90</div>
<div style="position:absolute;left:1069px;top:294px;width:142px;height:1px;background:#d6d6d6;"></div>
<div style="position:absolute;left:1126px;top:290px;width:3px;height:10px;background:#6cc35f;"></div>
<div style="position:absolute;left:1227px;top:288px;height:14px;line-height:14px;font-size:12px;color:#000;font-weight:normal;white-space:pre;">NH2-STAGDTHLGGEDFDNR-COOH</div>
<div style="position:absolute;left:1449px;top:288px;height:14px;line-height:14px;font-size:12px;color:#000;font-weight:normal;white-space:pre;"><span style="color:#0000ee;text-decoration:underline">P11142</span>, <span style="color:#0000ee;text-decoration:underline">P54652</span></div>
<div style="position:absolute;left:1292px;width:400px;top:289px;height:13px;line-height:13px;font-size:11px;color:#000;font-weight:normal;text-align:right;white-space:pre;">100</div>
<div style="position:absolute;left:1700px;top:290px;width:46px;height:10px;background:#6cc35f;"></div>
<svg style="position:absolute;left:1760.5px;top:287.0px" width="15" height="15"><use href="#ic"/></svg>
<div style="position:absolute;left:35px;top:303px;width:1748px;height:16px;background:#fff;"></div>
<div style="position:absolute;left:-320px;width:400px;top:304px;height:14px;line-height:14px;font-size:12px;color:#000;font-weight:normal;text-align:right;white-space:pre;">2827</div>
<div style="position:absolute;left:91px;top:305px;width:24px;height:11px;background:#6cc35f;"></div>
<div style="position:absolute;left:127px;top:304px;height:14px;line-height:14px;font-size:12px;color:#000;font-weight:normal;white-space:pre;">qExactive01819.4994.4994.2 File:"q...</div>
<div style="position:absolute;left:-10px;width:400px;top:305px;height:13px;line-height:13px;font-size:11px;color:#000;font-weight:normal;text-align:right;white-space:pre;">758.85</div>
<div style="position:absolute;left:403px;top:306px;width:87px;height:10px;background:#6cc35f;"></div>
<div style="position:absolute;left:181px;width:400px;top:305px;height:13px;line-height:13px;font-size:11px;color:#000;font-weight:normal;text-align:right;white-space:pre;">2</div>
<div style="position:absolute;left:594px;top:306px;width:88px;height:10px;background:#6cc35f;"></div>
<div style="position:absolute;left:450px;width:400px;top:305px;height:13px;line-height:13px;font-size:11px;color:#000;font-weight:normal;text-align:right;white-space:pre;">731910.50</div>
<div style="position:absolute;left:862px;top:306px;width:93px;height:10px;background:#6cc35f;"></div>
<div style="position:absolute;left:656px;width:400px;top:305px;height:13px;line-height:13px;font-size:11px;color:#000;font-weight:normal;text-align:right;white-space:pre;">1365.09</div>
<div style="position:absolute;left:1069px;top:310px;width:142px;height:1px;background:#d6d6d6;"></div>
<div style="position:absolute;left:1126px;top:306px;width:3px;height:10px;background:#6cc35f;"></div>
<div style="position:absolute;left:1227px;top:304px;height:14px;line-height:14px;font-size:12px;color:#000;font-weight:normal;white-space:pre;">NH2-QEYDESGPSIVHR-COOH</div>
<div style="position:absolute;left:1449px;top:304px;height:14px;line-height:14px;font-size:12px;color:#000;font-weight:normal;white-space:pre;"><span style="color:#0000ee;text-decoration:underline">A5A3E0</span>, <span style="color:#0000ee;text-decoration:underline">P0CG38</span>, <span style="color:#0000ee;text-decoration:underline">P0CG39</span>, <span style="color:#0000ee;text-decoration:underline">P60709</span>,</div>
<div style="position:absolute;left:1292px;width:400px;top:305px;height:13px;line-height:13px;font-size:11px;color:#000;font-weight:normal;text-align:right;white-space:pre;">100</div>
<div style="position:absolute;left:1700px;top:306px;width:46px;height:10px;background:#6cc35f;"></div>
<svg style="position:absolute;left:1760.5px;top:303.0px" width="15" height="15"><use href="#ic"/></svg>
<div style="position:absolute;left:35px;top:319px;width:1748px;height:16px;background:#f2f2f2;"></div>
<div style="position:absolute;left:-320px;width:400px;top:320px;height:14px;line-height:14px;font-size:12px;color:#000;font-weight:normal;text-align:right;white-space:pre;">2828</div>
<div style="position:absolute;left:91px;top:321px;width:24px;height:11px;background:#ffff00;"></div>
<div style="position:absolute;left:127px;top:320px;height:14px;line-height:14px;font-size:12px;color:#000;font-weight:normal;white-space:pre;">qExactive01819.4995.4995.2 File:"q...</div>
<div style="position:absolute;left:-10px;width:400px;top:321px;height:13px;line-height:13px;font-size:11px;color:#000;font-weight:normal;text-align:right;white-space:pre;">681.82</div>
<div style="position:absolute;left:403px;top:322px;width:78px;height:10px;background:#6cc35f;"></div>
<div style="position:absolute;left:181px;width:400px;top:321px;height:13px;line-height:13px;font-size:11px;color:#000;font-weight:normal;text-align:right;white-space:pre;">2</div>
<div style="position:absolute;left:594px;top:322px;width:88px;height:10px;background:#6cc35f;"></div>
<div style="position:absolute;left:450px;width:400px;top:321px;height:13px;line-height:13px;font-size:11px;color:#000;font-weight:normal;text-align:right;white-space:pre;">1595634.50</div>
<div style="position:absolute;left:862px;top:322px;width:99px;height:10px;background:#6cc35f;"></div>
<div style="position:absolute;left:656px;width:400px;top:321px;height:13px;line-height:13px;font-size:11px;color:#000;font-weight:normal;text-align:right;white-space:pre;">1365.25</div>
<div style="position:absolute;left:1069px;top:326px;width:142px;height:1px;background:#d6d6d6;"></div>
<div style="position:absolute;left:1126px;top:322px;width:3px;height:10px;background:#6cc35f;"></div>
<div style="position:absolute;left:1227px;top:320px;height:14px;line-height:14px;font-size:12px;color:#000;font-weight:normal;white-space:pre;">NH2-VVDL<span style="background:#1a1aff;color:#fff">M</span>AH<span style="background:#1a1aff;color:#fff">M</span>ASKE-COOH</div>
<div style="position:absolute;left:1449px;top:320px;height:14px;line-height:14px;font-size:12px;color:#000;font-weight:normal;white-space:pre;"><span style="color:#0000ee;text-decoration:underline">P04406</span></div>
<div style="position:absolute;left:1292px;width:400px;top:321px;height:13px;line-height:13px;font-size:11px;color:#000;font-weight:normal;text-align:right;white-space:pre;">100</div>
<div style="position:absolute;left:1700px;top:322px;width:46px;height:10px;background:#6cc35f;"></div>
<svg style="position:absolute;left:1760.5px;top:319.0px" width="15" height="15"><use href="#ic"/></svg>
<div style="position:absolute;left:35px;top:335px;width:1748px;height:16px;background:#39698a;"></div>
<div style="position:absolute;left:-320px;width:400px;top:336px;height:14px;line-height:14px;font-size:12px;color:#fff;font-weight:normal;text-align:right;white-space:pre;">2829</div>
<div style="position:absolute;left:91px;top:337px;width:24px;height:11px;background:#6cc35f;"></div>
<div style="position:absolute;left:127px;top:336px;height:14px;line-height:14px;font-size:12px;color:#fff;font-weight:normal;white-space:pre;">qExactive01819.4996.4996.2 File:"q...</div>
<div style="position:absolute;left:-10px;width:400px;top:337px;height:13px;line-height:13px;font-size:11px;color:#fff;font-weight:normal;text-align:right;white-space:pre;">892.46</div>
<div style="position:absolute;left:403px;top:338px;width:102px;height:10px;background:#6cc35f;"></div>
<div style="position:absolute;left:181px;width:400px;top:337px;height:13px;line-height:13px;font-size:11px;color:#fff;font-weight:normal;text-align:right;white-space:pre;">2</div>
<div style="position:absolute;left:594px;top:338px;width:88px;height:10px;background:#6cc35f;"></div>
<div style="position:absolute;left:450px;width:400px;top:337px;height:13px;line-height:13px;font-size:11px;color:#fff;font-weight:normal;text-align:right;white-space:pre;">378086.47</div>
<div style="position:absolute;left:862px;top:338px;width:89px;height:10px;background:#6cc35f;"></div>
<div style="position:absolute;left:656px;width:400px;top:337px;height:13px;line-height:13px;font-size:11px;color:#fff;font-weight:normal;text-align:right;white-space:pre;">1365.53</div>
<div style="position:absolute;left:1069px;top:342px;width:142px;height:1px;background:#5f87a3;"></div>
<div style="position:absolute;left:1126px;top:338px;width:3px;height:10px;background:#6cc35f;"></div>
<div style="position:absolute;left:1227px;top:336px;height:14px;line-height:14px;font-size:12px;color:#fff;font-weight:normal;white-space:pre;">NH2-AALAHSEEVTASQVAATK-COOH</div>
<div style="position:absolute;left:1449px;top:336px;height:14px;line-height:14px;font-size:12px;color:#fff;font-weight:normal;white-space:pre;"><span style="color:#fff;text-decoration:underline">Q15149</span></div>
<div style="position:absolute;left:1292px;width:400px;top:337px;height:13px;line-height:13px;font-size:11px;color:#fff;font-weight:normal;text-align:right;white-space:pre;">100</div>
<div style="position:absolute;left:1700px;top:338px;width:46px;height:10px;background:#6cc35f;"></div>
<svg style="position:absolute;left:1760.5px;top:335.0px" width="15" height="15"><use href="#ic"/></svg>
<div style="position:absolute;left:1783px;top:126px;width:16px;height:225px;background:#e4e6ea;border-left:1px solid #c8ccd2;"></div>
<div style="position:absolute;left:1784px;top:127px;width:14px;height:16px;background:linear-gradient(90deg,#f4f5f7,#e2e4e8);"></div>
<div style="position:absolute;left:1784px;top:319px;width:14px;height:16px;background:linear-gradient(90deg,#f4f5f7,#e2e4e8);"></div>
<div style="position:absolute;left:1787px;top:132px;width:0;height:0;border-left:4.5px solid transparent;border-right:4.5px solid transparent;border-bottom:7px solid #333;"></div>
<div style="position:absolute;left:1787px;top:338px;width:0;height:0;border-left:4.5px solid transparent;border-right:4.5px solid transparent;border-top:7px solid #333;"></div>
<div style="position:absolute;left:1784px;top:143px;width:14px;height:193px;background:linear-gradient(90deg,#9a9ea4 0,#c4c7cc 2px,#d2d5d9 60%,#c9ccd0);border-radius:0 12px 12px 0;box-shadow:inset 0 4px 3px -2px rgba(0,0,0,0.75),inset 0 -4px 3px -2px rgba(0,0,0,0.75);"></div>
<div style="position:absolute;left:1784px;top:184px;width:15px;height:29px;background:linear-gradient(90deg,#f4f8fb 0,#f4f8fb 1.5px,#b2c8dc 3px,#cfe0ec 60%,#e6f0f6);border:1.5px solid #3b5166;border-left:none;border-radius:0 15px 15px 0;"></div>
<div style="position:absolute;left:28px;top:381px;height:14px;line-height:14px;font-size:12px;color:#222;font-weight:bold;white-space:pre;">Peptide-Spectrum Matches</div>
<svg style="position:absolute;left:868px;top:383px" width="32" height="11" viewBox="0 0 32 11"><path d="M13.5 7.2 L17.5 0.2 L21.5 7.2 Z" fill="#b4b4b4"/><rect x="16.8" y="5" width="1.4" height="5.5" fill="#b4b4b4"/></svg>
<div style="position:absolute;left:893px;top:381px;font-size:12px;line-height:14px;color:#b4b4b4;font-weight:bold">?</div>
<div style="position:absolute;left:16px;top:396px;width:891px;height:583px;border:1px solid #a4a7ab;border-color:#a9abae #bcbec2 #c9cbce #c0c2c6;border-radius:6px;box-shadow:inset 1px 1px 2px rgba(0,0,0,0.16),inset -1px -1px 1.5px rgba(0,0,0,0.07);background:#fff;"></div>
<div style="position:absolute;left:33px;top:415px;width:856px;height:42px;border:1px solid #a6aab2;background:#fff;"></div>
<div style="position:absolute;left:34px;top:416px;width:854px;height:22px;"></div>
<div class="hdr" style="position:absolute;left:34px;top:416px;width:854px;height:22px;"></div>
<div style="position:absolute;left:34px;top:436px;width:854px;height:2px;background:#9a9ea6;"></div>
<div style="position:absolute;left:63px;top:417px;width:2px;height:19px;background:linear-gradient(90deg,#b4b8bf,#fff);"></div>
<div style="position:absolute;left:100px;top:417px;width:2px;height:19px;background:linear-gradient(90deg,#b4b8bf,#fff);"></div>
<div style="position:absolute;left:433px;top:417px;width:2px;height:19px;background:linear-gradient(90deg,#b4b8bf,#fff);"></div>
<div style="position:absolute;left:766px;top:417px;width:2px;height:19px;background:linear-gradient(90deg,#b4b8bf,#fff);"></div>
<div style="position:absolute;left:856px;top:417px;width:2px;height:19px;background:linear-gradient(90deg,#b4b8bf,#fff);"></div>
<div style="position:absolute;left:69px;top:420px;height:14px;line-height:14px;font-size:12px;color:#000;font-weight:normal;white-space:pre;">ID</div>
<div style="position:absolute;left:106px;top:420px;height:14px;line-height:14px;font-size:12px;color:#000;font-weight:normal;white-space:pre;">Sequence</div>
<div style="position:absolute;left:439px;top:420px;height:14px;line-height:14px;font-size:12px;color:#000;font-weight:normal;white-space:pre;">Protein(s)</div>
<div style="position:absolute;left:772px;top:420px;height:14px;line-height:14px;font-size:12px;color:#000;font-weight:normal;white-space:pre;">Confidence</div>
<div style="position:absolute;left:35px;top:438px;width:852px;height:18px;background:#fff;"></div>
<div style="position:absolute;left:-340px;width:400px;top:440px;height:14px;line-height:14px;font-size:12px;color:#000;font-weight:normal;text-align:right;white-space:pre;">1</div>
<div style="position:absolute;left:71px;top:442px;width:24px;height:10px;background:#6cc35f;"></div>
<div style="position:absolute;left:106px;top:440px;height:14px;line-height:14px;font-size:12px;color:#000;font-weight:normal;white-space:pre;">NH2-AALAHSEEVTASQVAATK-COOH</div>
<div style="position:absolute;left:439px;top:440px;height:14px;line-height:14px;font-size:12px;color:#000;font-weight:normal;white-space:pre;"><span class="lnk">Q15149</span></div>
<div style="position:absolute;left:396px;width:400px;top:441px;height:13px;line-height:13px;font-size:11px;color:#000;font-weight:normal;text-align:right;white-space:pre;">100</div>
<div style="position:absolute;left:804px;top:442px;width:46px;height:10px;background:#6cc35f;"></div>
<svg style="position:absolute;left:865.0px;top:439.5px" width="15" height="15"><use href="#ic"/></svg>
<div style="position:absolute;left:32px;top:477px;height:14px;line-height:14px;font-size:12.3px;color:#222;font-weight:normal;white-space:pre;font-style:italic;">Spectrum Identification Results</div>
<div style="position:absolute;left:33px;top:500px;width:856px;height:442px;border:1px solid #a6aab2;background:#fff;"></div>
<div class="hdr" style="position:absolute;left:34px;top:501px;width:854px;height:22px;"></div>
<div style="position:absolute;left:34px;top:521px;width:854px;height:2px;background:#9a9ea6;"></div>
<div style="position:absolute;left:63px;top:502px;width:2px;height:19px;background:linear-gradient(90deg,#b4b8bf,#fff);"></div>
<div style="position:absolute;left:100px;top:502px;width:2px;height:19px;background:linear-gradient(90deg,#b4b8bf,#fff);"></div>
<div style="position:absolute;left:137px;top:502px;width:2px;height:19px;background:linear-gradient(90deg,#b4b8bf,#fff);"></div>
<div style="position:absolute;left:676px;top:502px;width:2px;height:19px;background:linear-gradient(90deg,#b4b8bf,#fff);"></div>
<div style="position:absolute;left:766px;top:502px;width:2px;height:19px;background:linear-gradient(90deg,#b4b8bf,#fff);"></div>
<div style="position:absolute;left:856px;top:502px;width:2px;height:19px;background:linear-gradient(90deg,#b4b8bf,#fff);"></div>
<div style="position:absolute;left:69px;top:505px;height:14px;line-height:14px;font-size:12px;color:#000;font-weight:normal;white-space:pre;">SE</div>
<div style="position:absolute;left:106px;top:505px;height:14px;line-height:14px;font-size:12px;color:#000;font-weight:normal;white-space:pre;">Rnk</div>
<div style="position:absolute;left:143px;top:505px;height:14px;line-height:14px;font-size:12px;color:#000;font-weight:normal;white-space:pre;">Sequence</div>
<div style="position:absolute;left:683px;top:505px;height:14px;line-height:14px;font-size:12px;color:#000;font-weight:normal;white-space:pre;">Charge</div>
<div style="position:absolute;left:772px;top:505px;height:14px;line-height:14px;font-size:12px;color:#000;font-weight:normal;white-space:pre;">Confidence</div>
<div style="position:absolute;left:35px;top:523px;width:852px;height:16px;background:#39698a;"></div>
<div style="position:absolute;left:-340px;width:400px;top:525px;height:14px;line-height:14px;font-size:12px;color:#fff;font-weight:normal;text-align:right;white-space:pre;">1</div>
<div style="position:absolute;left:70px;top:527px;width:24px;height:10px;background:#ff99ff;"></div>
<div style="position:absolute;left:-267px;width:400px;top:525px;height:14px;line-height:14px;font-size:12px;color:#fff;font-weight:normal;text-align:right;white-space:pre;">1</div>
<div style="position:absolute;left:143px;top:525px;height:14px;line-height:14px;font-size:12px;color:#fff;font-weight:normal;white-space:pre;">NH2-AALAHSEEVTASQVAATK-COOH</div>
<div style="position:absolute;left:297px;width:400px;top:525px;height:13px;line-height:13px;font-size:11px;color:#fff;font-weight:normal;text-align:right;white-space:pre;">2</div>
<div style="position:absolute;left:705px;top:526px;width:11px;height:10px;background:#6cc35f;"></div>
<div style="position:absolute;left:396px;width:400px;top:525px;height:13px;line-height:13px;font-size:11px;color:#fff;font-weight:normal;text-align:right;white-space:pre;">100</div>
<div style="position:absolute;left:804px;top:526px;width:46px;height:10px;background:#6cc35f;"></div>
<svg style="position:absolute;left:865.0px;top:523.5px" width="15" height="15"><use href="#ic"/></svg>
<div style="position:absolute;left:35px;top:539px;width:852px;height:16px;background:#f2f2f2;"></div>
<div style="position:absolute;left:-340px;width:400px;top:541px;height:14px;line-height:14px;font-size:12px;color:#000;font-weight:normal;text-align:right;white-space:pre;">2</div>
<div style="position:absolute;left:70px;top:543px;width:24px;height:10px;background:#9999ff;"></div>
<div style="position:absolute;left:-267px;width:400px;top:541px;height:14px;line-height:14px;font-size:12px;color:#000;font-weight:normal;text-align:right;white-space:pre;">1</div>
<div style="position:absolute;left:143px;top:541px;height:14px;line-height:14px;font-size:12px;color:#000;font-weight:normal;white-space:pre;">NH2-AALAHSEEVTASQVAATK-COOH</div>
<div style="position:absolute;left:297px;width:400px;top:541px;height:13px;line-height:13px;font-size:11px;color:#000;font-weight:normal;text-align:right;white-space:pre;">2</div>
<div style="position:absolute;left:705px;top:542px;width:11px;height:10px;background:#6cc35f;"></div>
<div style="position:absolute;left:396px;width:400px;top:541px;height:13px;line-height:13px;font-size:11px;color:#000;font-weight:normal;text-align:right;white-space:pre;">100</div>
<div style="position:absolute;left:804px;top:542px;width:46px;height:10px;background:#6cc35f;"></div>
<svg style="position:absolute;left:865.0px;top:539.5px" width="15" height="15"><use href="#ic"/></svg>
<div style="position:absolute;left:35px;top:555px;width:852px;height:16px;background:#fff;"></div>
<div style="position:absolute;left:-340px;width:400px;top:557px;height:14px;line-height:14px;font-size:12px;color:#000;font-weight:normal;text-align:right;white-space:pre;">3</div>
<div style="position:absolute;left:70px;top:559px;width:24px;height:10px;background:#99ffff;"></div>
<div style="position:absolute;left:-267px;width:400px;top:557px;height:14px;line-height:14px;font-size:12px;color:#000;font-weight:normal;text-align:right;white-space:pre;">1</div>
<div style="position:absolute;left:143px;top:557px;height:14px;line-height:14px;font-size:12px;color:#000;font-weight:normal;white-space:pre;">NH2-AALAHSEEVTASQVAATK-COOH</div>
<div style="position:absolute;left:297px;width:400px;top:557px;height:13px;line-height:13px;font-size:11px;color:#000;font-weight:normal;text-align:right;white-space:pre;">2</div>
<div style="position:absolute;left:705px;top:558px;width:11px;height:10px;background:#6cc35f;"></div>
<div style="position:absolute;left:396px;width:400px;top:557px;height:13px;line-height:13px;font-size:11px;color:#000;font-weight:normal;text-align:right;white-space:pre;">100</div>
<div style="position:absolute;left:804px;top:558px;width:46px;height:10px;background:#6cc35f;"></div>
<svg style="position:absolute;left:865.0px;top:555.5px" width="15" height="15"><use href="#ic"/></svg>
<div style="position:absolute;left:35px;top:571px;width:852px;height:16px;background:#f2f2f2;"></div>
<div style="position:absolute;left:-340px;width:400px;top:573px;height:14px;line-height:14px;font-size:12px;color:#000;font-weight:normal;text-align:right;white-space:pre;">4</div>
<div style="position:absolute;left:70px;top:575px;width:24px;height:10px;background:#d6bcd6;"></div>
<div style="position:absolute;left:-267px;width:400px;top:573px;height:14px;line-height:14px;font-size:12px;color:#000;font-weight:normal;text-align:right;white-space:pre;">1</div>
<div style="position:absolute;left:143px;top:573px;height:14px;line-height:14px;font-size:12px;color:#000;font-weight:normal;white-space:pre;">NH2-AALAHSEEVTASQVAATK-COOH</div>
<div style="position:absolute;left:297px;width:400px;top:573px;height:13px;line-height:13px;font-size:11px;color:#000;font-weight:normal;text-align:right;white-space:pre;">2</div>
<div style="position:absolute;left:705px;top:574px;width:11px;height:10px;background:#6cc35f;"></div>
<div style="position:absolute;left:396px;width:400px;top:573px;height:13px;line-height:13px;font-size:11px;color:#000;font-weight:normal;text-align:right;white-space:pre;">100</div>
<div style="position:absolute;left:804px;top:574px;width:46px;height:10px;background:#6cc35f;"></div>
<svg style="position:absolute;left:865.0px;top:571.5px" width="15" height="15"><use href="#ic"/></svg>
<div style="position:absolute;left:35px;top:587px;width:852px;height:16px;background:#fff;"></div>
<div style="position:absolute;left:-340px;width:400px;top:589px;height:14px;line-height:14px;font-size:12px;color:#000;font-weight:normal;text-align:right;white-space:pre;">5</div>
<div style="position:absolute;left:70px;top:591px;width:24px;height:10px;background:#cc5c5c;"></div>
<div style="position:absolute;left:-267px;width:400px;top:589px;height:14px;line-height:14px;font-size:12px;color:#000;font-weight:normal;text-align:right;white-space:pre;">1</div>
<div style="position:absolute;left:143px;top:589px;height:14px;line-height:14px;font-size:12px;color:#000;font-weight:normal;white-space:pre;">NH2-AALAHSEEVTASQVAATK-COOH</div>
<div style="position:absolute;left:297px;width:400px;top:589px;height:13px;line-height:13px;font-size:11px;color:#000;font-weight:normal;text-align:right;white-space:pre;">2</div>
<div style="position:absolute;left:705px;top:590px;width:11px;height:10px;background:#6cc35f;"></div>
<div style="position:absolute;left:396px;width:400px;top:589px;height:13px;line-height:13px;font-size:11px;color:#000;font-weight:normal;text-align:right;white-space:pre;">100</div>
<div style="position:absolute;left:804px;top:590px;width:46px;height:10px;background:#6cc35f;"></div>
<svg style="position:absolute;left:865.0px;top:587.5px" width="15" height="15"><use href="#ic"/></svg>
<div style="position:absolute;left:35px;top:603px;width:852px;height:16px;background:#f2f2f2;"></div>
<div style="position:absolute;left:-340px;width:400px;top:605px;height:14px;line-height:14px;font-size:12px;color:#000;font-weight:normal;text-align:right;white-space:pre;">6</div>
<div style="position:absolute;left:70px;top:607px;width:24px;height:10px;background:#d6bcd6;"></div>
<div style="position:absolute;left:-267px;width:400px;top:605px;height:14px;line-height:14px;font-size:12px;color:#000;font-weight:normal;text-align:right;white-space:pre;">2</div>
<div style="position:absolute;left:143px;top:605px;height:14px;line-height:14px;font-size:12px;color:#000;font-weight:normal;white-space:pre;">NH2-LRAE<span style="color:#ff2020">T</span>NFRLNQITK-COOH</div>
<div style="position:absolute;left:297px;width:400px;top:605px;height:13px;line-height:13px;font-size:11px;color:#000;font-weight:normal;text-align:right;white-space:pre;">2</div>
<div style="position:absolute;left:705px;top:606px;width:11px;height:10px;background:#6cc35f;"></div>
<div style="position:absolute;left:396px;width:400px;top:605px;height:13px;line-height:13px;font-size:11px;color:#000;font-weight:normal;text-align:right;white-space:pre;">46</div>
<div style="position:absolute;left:804px;top:606px;width:21px;height:10px;background:#6cc35f;"></div>
<svg style="position:absolute;left:865.0px;top:603.5px" width="15" height="15"><use href="#ix"/></svg>
<div style="position:absolute;left:35px;top:619px;width:852px;height:16px;background:#fff;"></div>
<div style="position:absolute;left:-340px;width:400px;top:621px;height:14px;line-height:14px;font-size:12px;color:#000;font-weight:normal;text-align:right;white-space:pre;">7</div>
<div style="position:absolute;left:70px;top:623px;width:24px;height:10px;background:#d6bcd6;"></div>
<div style="position:absolute;left:-267px;width:400px;top:621px;height:14px;line-height:14px;font-size:12px;color:#000;font-weight:normal;text-align:right;white-space:pre;">3</div>
<div style="position:absolute;left:143px;top:621px;height:14px;line-height:14px;font-size:12px;color:#000;font-weight:normal;white-space:pre;">NH2-WLRFENYLSLDAEK-COOH</div>
<div style="position:absolute;left:297px;width:400px;top:621px;height:13px;line-height:13px;font-size:11px;color:#000;font-weight:normal;text-align:right;white-space:pre;">2</div>
<div style="position:absolute;left:705px;top:622px;width:11px;height:10px;background:#6cc35f;"></div>
<div style="position:absolute;left:396px;width:400px;top:621px;height:13px;line-height:13px;font-size:11px;color:#000;font-weight:normal;text-align:right;white-space:pre;">42</div>
<div style="position:absolute;left:804px;top:622px;width:19px;height:10px;background:#6cc35f;"></div>
<svg style="position:absolute;left:865.0px;top:619.5px" width="15" height="15"><use href="#ix"/></svg>
<div style="position:absolute;left:35px;top:635px;width:852px;height:16px;background:#f2f2f2;"></div>
<div style="position:absolute;left:-340px;width:400px;top:637px;height:14px;line-height:14px;font-size:12px;color:#000;font-weight:normal;text-align:right;white-space:pre;">8</div>
<div style="position:absolute;left:70px;top:639px;width:24px;height:10px;background:#d6bcd6;"></div>
<div style="position:absolute;left:-267px;width:400px;top:637px;height:14px;line-height:14px;font-size:12px;color:#000;font-weight:normal;text-align:right;white-space:pre;">4</div>
<div style="position:absolute;left:143px;top:637px;height:14px;line-height:14px;font-size:12px;color:#000;font-weight:normal;white-space:pre;">NH2-APTRSAPSPSGLREETK-COOH</div>
<div style="position:absolute;left:297px;width:400px;top:637px;height:13px;line-height:13px;font-size:11px;color:#000;font-weight:normal;text-align:right;white-space:pre;">2</div>
<div style="position:absolute;left:705px;top:638px;width:11px;height:10px;background:#6cc35f;"></div>
<div style="position:absolute;left:396px;width:400px;top:637px;height:13px;line-height:13px;font-size:11px;color:#000;font-weight:normal;text-align:right;white-space:pre;">35</div>
<div style="position:absolute;left:804px;top:638px;width:16px;height:10px;background:#6cc35f;"></div>
<svg style="position:absolute;left:865.0px;top:635.5px" width="15" height="15"><use href="#ix"/></svg>
<div style="position:absolute;left:35px;top:651px;width:852px;height:16px;background:#fff;"></div>
<div style="position:absolute;left:-340px;width:400px;top:653px;height:14px;line-height:14px;font-size:12px;color:#000;font-weight:normal;text-align:right;white-space:pre;">9</div>
<div style="position:absolute;left:70px;top:655px;width:24px;height:10px;background:#d6bcd6;"></div>
<div style="position:absolute;left:-267px;width:400px;top:653px;height:14px;line-height:14px;font-size:12px;color:#000;font-weight:normal;text-align:right;white-space:pre;">5</div>
<div style="position:absolute;left:143px;top:653px;height:14px;line-height:14px;font-size:12px;color:#000;font-weight:normal;white-space:pre;">NH2-IAKMLFATPPSSTYEK-COOH</div>
<div style="position:absolute;left:297px;width:400px;top:653px;height:13px;line-height:13px;font-size:11px;color:#000;font-weight:normal;text-align:right;white-space:pre;">2</div>
<div style="position:absolute;left:705px;top:654px;width:11px;height:10px;background:#6cc35f;"></div>
<div style="position:absolute;left:396px;width:400px;top:653px;height:13px;line-height:13px;font-size:11px;color:#000;font-weight:normal;text-align:right;white-space:pre;">26</div>
<div style="position:absolute;left:804px;top:654px;width:12px;height:10px;background:#6cc35f;"></div>
<svg style="position:absolute;left:865.0px;top:651.5px" width="15" height="15"><use href="#ix"/></svg>
<div style="position:absolute;left:35px;top:667px;width:852px;height:16px;background:#f2f2f2;"></div>
<div style="position:absolute;left:-340px;width:400px;top:669px;height:14px;line-height:14px;font-size:12px;color:#000;font-weight:normal;text-align:right;white-space:pre;">10</div>
<div style="position:absolute;left:70px;top:671px;width:24px;height:10px;background:#9999ff;"></div>
<div style="position:absolute;left:-267px;width:400px;top:669px;height:14px;line-height:14px;font-size:12px;color:#000;font-weight:normal;text-align:right;white-space:pre;">2</div>
<div style="position:absolute;left:143px;top:669px;height:14px;line-height:14px;font-size:12px;color:#000;font-weight:normal;white-space:pre;">NH2-LRAE<span style="color:#ff2020">T</span>NFRLNQITK-COOH</div>
<div style="position:absolute;left:297px;width:400px;top:669px;height:13px;line-height:13px;font-size:11px;color:#000;font-weight:normal;text-align:right;white-space:pre;">2</div>
<div style="position:absolute;left:705px;top:670px;width:11px;height:10px;background:#6cc35f;"></div>
<div style="position:absolute;left:396px;width:400px;top:669px;height:13px;line-height:13px;font-size:11px;color:#000;font-weight:normal;text-align:right;white-space:pre;">0</div>
<svg style="position:absolute;left:865.0px;top:667.5px" width="15" height="15"><use href="#ix"/></svg>
<div style="position:absolute;left:35px;top:683px;width:852px;height:16px;background:#fff;"></div>
<div style="position:absolute;left:-340px;width:400px;top:685px;height:14px;line-height:14px;font-size:12px;color:#000;font-weight:normal;text-align:right;white-space:pre;">11</div>
<div style="position:absolute;left:70px;top:687px;width:24px;height:10px;background:#9999ff;"></div>
<div style="position:absolute;left:-267px;width:400px;top:685px;height:14px;line-height:14px;font-size:12px;color:#000;font-weight:normal;text-align:right;white-space:pre;">3</div>
<div style="position:absolute;left:143px;top:685px;height:14px;line-height:14px;font-size:12px;color:#000;font-weight:normal;white-space:pre;">NH2-APTRSAPSPSGLREETK-COOH</div>
<div style="position:absolute;left:297px;width:400px;top:685px;height:13px;line-height:13px;font-size:11px;color:#000;font-weight:normal;text-align:right;white-space:pre;">2</div>
<div style="position:absolute;left:705px;top:686px;width:11px;height:10px;background:#6cc35f;"></div>
<div style="position:absolute;left:396px;width:400px;top:685px;height:13px;line-height:13px;font-size:11px;color:#000;font-weight:normal;text-align:right;white-space:pre;">0</div>
<svg style="position:absolute;left:865.0px;top:683.5px" width="15" height="15"><use href="#ix"/></svg>
<div style="position:absolute;left:35px;top:699px;width:852px;height:16px;background:#f2f2f2;"></div>
<div style="position:absolute;left:-340px;width:400px;top:701px;height:14px;line-height:14px;font-size:12px;color:#000;font-weight:normal;text-align:right;white-space:pre;">12</div>
<div style="position:absolute;left:70px;top:703px;width:24px;height:10px;background:#9999ff;"></div>
<div style="position:absolute;left:-267px;width:400px;top:701px;height:14px;line-height:14px;font-size:12px;color:#000;font-weight:normal;text-align:right;white-space:pre;">9</div>
<div style="position:absolute;left:143px;top:701px;height:14px;line-height:14px;font-size:12px;color:#000;font-weight:normal;white-space:pre;">NH2-IHGR<span style="color:#ff2020">S</span>VLHIVA<span style="color:#ff2020">S</span>LIILHL<span style="color:#ff2020">S</span>GATK-COOH</div>
<div style="position:absolute;left:297px;width:400px;top:701px;height:13px;line-height:13px;font-size:11px;color:#000;font-weight:normal;text-align:right;white-space:pre;">3</div>
<div style="position:absolute;left:705px;top:702px;width:16px;height:10px;background:#6cc35f;"></div>
<div style="position:absolute;left:396px;width:400px;top:701px;height:13px;line-height:13px;font-size:11px;color:#000;font-weight:normal;text-align:right;white-space:pre;">0</div>
<svg style="position:absolute;left:865.0px;top:699.5px" width="15" height="15"><use href="#ix"/></svg>
<div style="position:absolute;left:35px;top:715px;width:852px;height:16px;background:#fff;"></div>
<div style="position:absolute;left:-340px;width:400px;top:717px;height:14px;line-height:14px;font-size:12px;color:#000;font-weight:normal;text-align:right;white-space:pre;">13</div>
<div style="position:absolute;left:70px;top:719px;width:24px;height:10px;background:#9999ff;"></div>
<div style="position:absolute;left:-267px;width:400px;top:717px;height:14px;line-height:14px;font-size:12px;color:#000;font-weight:normal;text-align:right;white-space:pre;">10</div>
<div style="position:absolute;left:143px;top:717px;height:14px;line-height:14px;font-size:12px;color:#000;font-weight:normal;white-space:pre;">NH2-KYFIEASPLPSSYPGK-COOH</div>
<div style="position:absolute;left:297px;width:400px;top:717px;height:13px;line-height:13px;font-size:11px;color:#000;font-weight:normal;text-align:right;white-space:pre;">2</div>
<div style="position:absolute;left:705px;top:718px;width:11px;height:10px;background:#6cc35f;"></div>
<div style="position:absolute;left:396px;width:400px;top:717px;height:13px;line-height:13px;font-size:11px;color:#000;font-weight:normal;text-align:right;white-space:pre;">0</div>
<svg style="position:absolute;left:865.0px;top:715.5px" width="15" height="15"><use href="#ix"/></svg>
<div style="position:absolute;left:36px;top:731px;width:850px;height:208px;border-left:1.5px solid #b0b4bc;border-right:1.5px solid #b0b4bc;border-bottom:1.5px solid #b0b4bc;"></div>
<div style="position:absolute;left:46px;top:954px;width:9px;height:9px;background:#ff99ff;"></div>
<div style="position:absolute;left:58.5px;top:951px;height:14px;line-height:14px;font-size:12px;color:#000;font-weight:normal;white-space:pre;letter-spacing:-0.1px;">Mascot</div>
<div style="position:absolute;left:104.5px;top:954px;width:9px;height:9px;background:#9999ff;"></div>
<div style="position:absolute;left:116.5px;top:951px;height:14px;line-height:14px;font-size:12px;color:#000;font-weight:normal;white-space:pre;letter-spacing:-0.1px;">OMSSA</div>
<div style="position:absolute;left:165px;top:954px;width:9px;height:9px;background:#99ffff;"></div>
<div style="position:absolute;left:176.5px;top:951px;height:14px;line-height:14px;font-size:12px;color:#000;font-weight:normal;white-space:pre;letter-spacing:-0.1px;">X!Tandem</div>
<div style="position:absolute;left:239.5px;top:954px;width:9px;height:9px;background:#d6bcd6;"></div>
<div style="position:absolute;left:251.5px;top:951px;height:14px;line-height:14px;font-size:12px;color:#000;font-weight:normal;white-space:pre;letter-spacing:-0.1px;">MS Amanda</div>
<div style="position:absolute;left:324.5px;top:954px;width:9px;height:9px;background:#cc5c5c;"></div>
<div style="position:absolute;left:336.5px;top:951px;height:14px;line-height:14px;font-size:12px;color:#000;font-weight:normal;white-space:pre;letter-spacing:-0.1px;">MS-GF+</div>
<div style="position:absolute;left:387.5px;top:954px;width:9px;height:9px;background:#6cc35f;"></div>
<div style="position:absolute;left:399.5px;top:951px;height:14px;line-height:14px;font-size:12px;color:#000;font-weight:normal;white-space:pre;letter-spacing:-0.1px;">PeptideShaker</div>
<div style="position:absolute;left:934px;top:381px;height:13px;line-height:13px;font-size:11.7px;color:#222;font-weight:bold;white-space:pre;">Spectrum &amp; Fragment Ions (NH2-AALAHSEEVTASQVAATK-COOH   2+   892.46 m/z)</div>
<svg style="position:absolute;left:1778px;top:383px" width="32" height="11" viewBox="0 0 32 11"><path d="M13.5 7.2 L17.5 0.2 L21.5 7.2 Z" fill="#b4b4b4"/><rect x="16.8" y="5" width="1.4" height="5.5" fill="#b4b4b4"/></svg>
<div style="position:absolute;left:1803px;top:381px;font-size:12px;line-height:14px;color:#b4b4b4;font-weight:bold">?</div>
<div style="position:absolute;left:921px;top:396px;width:896px;height:583px;border:1px solid #a4a7ab;border-color:#a9abae #bcbec2 #c9cbce #c0c2c6;border-radius:6px;box-shadow:inset 1px 1px 2px rgba(0,0,0,0.16),inset -1px -1px 1.5px rgba(0,0,0,0.07);background:#fff;"></div>
<svg style="position:absolute;left:0;top:0" width="1936" height="1176"><line x1="976.6" y1="902.3" x2="1758" y2="902.3" stroke="#3a3a3a" stroke-width="1.8"/><path d="M1756 896.5 L1764 902.3 L1756 908 Z" fill="#111"/><line x1="976.6" y1="902.3" x2="976.6" y2="430" stroke="#3a3a3a" stroke-width="1.8"/><path d="M971.1 432 L976.6 425 L982.1 432 Z" fill="#111"/><line x1="971.6" y1="902.3" x2="976.6" y2="902.3" stroke="#333" stroke-width="1"/><line x1="971.6" y1="874.7" x2="976.6" y2="874.7" stroke="#333" stroke-width="1"/><line x1="971.6" y1="847.2" x2="976.6" y2="847.2" stroke="#333" stroke-width="1"/><line x1="971.6" y1="819.6" x2="976.6" y2="819.6" stroke="#333" stroke-width="1"/><line x1="971.6" y1="792.1" x2="976.6" y2="792.1" stroke="#333" stroke-width="1"/><line x1="971.6" y1="764.5" x2="976.6" y2="764.5" stroke="#333" stroke-width="1"/><line x1="971.6" y1="736.9" x2="976.6" y2="736.9" stroke="#333" stroke-width="1"/><line x1="971.6" y1="709.4" x2="976.6" y2="709.4" stroke="#333" stroke-width="1"/><line x1="971.6" y1="681.8" x2="976.6" y2="681.8" stroke="#333" stroke-width="1"/><line x1="971.6" y1="654.3" x2="976.6" y2="654.3" stroke="#333" stroke-width="1"/><line x1="971.6" y1="626.7" x2="976.6" y2="626.7" stroke="#333" stroke-width="1"/><line x1="971.6" y1="599.1" x2="976.6" y2="599.1" stroke="#333" stroke-width="1"/><line x1="971.6" y1="571.6" x2="976.6" y2="571.6" stroke="#333" stroke-width="1"/><line x1="971.6" y1="544.0" x2="976.6" y2="544.0" stroke="#333" stroke-width="1"/><line x1="971.6" y1="516.5" x2="976.6" y2="516.5" stroke="#333" stroke-width="1"/><line x1="971.6" y1="488.9" x2="976.6" y2="488.9" stroke="#333" stroke-width="1"/><line x1="971.6" y1="461.3" x2="976.6" y2="461.3" stroke="#333" stroke-width="1"/><line x1="976.6" y1="902.3" x2="976.6" y2="906.3" stroke="#333" stroke-width="1"/><line x1="1025.6" y1="902.3" x2="1025.6" y2="906.3" stroke="#333" stroke-width="1"/><line x1="1074.7" y1="902.3" x2="1074.7" y2="906.3" stroke="#333" stroke-width="1"/><line x1="1123.7" y1="902.3" x2="1123.7" y2="906.3" stroke="#333" stroke-width="1"/><line x1="1172.8" y1="902.3" x2="1172.8" y2="906.3" stroke="#333" stroke-width="1"/><line x1="1221.8" y1="902.3" x2="1221.8" y2="906.3" stroke="#333" stroke-width="1"/><line x1="1270.8" y1="902.3" x2="1270.8" y2="906.3" stroke="#333" stroke-width="1"/><line x1="1319.9" y1="902.3" x2="1319.9" y2="906.3" stroke="#333" stroke-width="1"/><line x1="1368.9" y1="902.3" x2="1368.9" y2="906.3" stroke="#333" stroke-width="1"/><line x1="1418.0" y1="902.3" x2="1418.0" y2="906.3" stroke="#333" stroke-width="1"/><line x1="1467.0" y1="902.3" x2="1467.0" y2="906.3" stroke="#333" stroke-width="1"/><line x1="1516.0" y1="902.3" x2="1516.0" y2="906.3" stroke="#333" stroke-width="1"/><line x1="1565.1" y1="902.3" x2="1565.1" y2="906.3" stroke="#333" stroke-width="1"/><line x1="1614.1" y1="902.3" x2="1614.1" y2="906.3" stroke="#333" stroke-width="1"/><line x1="1663.2" y1="902.3" x2="1663.2" y2="906.3" stroke="#333" stroke-width="1"/><line x1="1712.2" y1="902.3" x2="1712.2" y2="906.3" stroke="#333" stroke-width="1"/><line x1="1033" y1="901.3" x2="1033" y2="896.8" stroke="#d2d2d2" stroke-width="1.4"/><line x1="1039.8" y1="901.3" x2="1039.8" y2="855.4" stroke="#d2d2d2" stroke-width="1.4"/><line x1="1040.6" y1="901.3" x2="1040.6" y2="891" stroke="#d2d2d2" stroke-width="1.4"/><line x1="1043" y1="901.3" x2="1043" y2="895" stroke="#d2d2d2" stroke-width="1.4"/><line x1="1046" y1="901.3" x2="1046" y2="895" stroke="#d2d2d2" stroke-width="1.4"/><line x1="1057" y1="901.3" x2="1057" y2="894.6" stroke="#d2d2d2" stroke-width="1.4"/><line x1="1058.5" y1="901.3" x2="1058.5" y2="894.6" stroke="#d2d2d2" stroke-width="1.4"/><line x1="1063" y1="901.3" x2="1063" y2="890" stroke="#d2d2d2" stroke-width="1.4"/><line x1="1067" y1="901.3" x2="1067" y2="890" stroke="#d2d2d2" stroke-width="1.4"/><line x1="1080" y1="901.3" x2="1080" y2="880.5" stroke="#d2d2d2" stroke-width="1.4"/><line x1="1083" y1="901.3" x2="1083" y2="891" stroke="#d2d2d2" stroke-width="1.4"/><line x1="1086" y1="901.3" x2="1086" y2="891" stroke="#d2d2d2" stroke-width="1.4"/><line x1="1089.5" y1="901.3" x2="1089.5" y2="891" stroke="#d2d2d2" stroke-width="1.4"/><line x1="1092" y1="901.3" x2="1092" y2="894" stroke="#d2d2d2" stroke-width="1.4"/><line x1="1129.6" y1="901.3" x2="1129.6" y2="894" stroke="#d2d2d2" stroke-width="1.4"/><line x1="1137.7" y1="901.3" x2="1137.7" y2="887" stroke="#d2d2d2" stroke-width="1.4"/><line x1="1141.8" y1="901.3" x2="1141.8" y2="893.5" stroke="#d2d2d2" stroke-width="1.4"/><line x1="1148" y1="901.3" x2="1148" y2="890.8" stroke="#d2d2d2" stroke-width="1.4"/><line x1="1159.5" y1="901.3" x2="1159.5" y2="892.7" stroke="#d2d2d2" stroke-width="1.4"/><line x1="1175.9" y1="901.3" x2="1175.9" y2="894" stroke="#d2d2d2" stroke-width="1.4"/><line x1="1190.8" y1="901.3" x2="1190.8" y2="807.8" stroke="#d2d2d2" stroke-width="1.4"/><line x1="1197.6" y1="901.3" x2="1197.6" y2="892.7" stroke="#d2d2d2" stroke-width="1.4"/><line x1="1216.7" y1="901.3" x2="1216.7" y2="858.7" stroke="#d2d2d2" stroke-width="1.4"/><line x1="1219.4" y1="901.3" x2="1219.4" y2="887" stroke="#d2d2d2" stroke-width="1.4"/><line x1="1224.8" y1="901.3" x2="1224.8" y2="887" stroke="#d2d2d2" stroke-width="1.4"/><line x1="1230.3" y1="901.3" x2="1230.3" y2="891" stroke="#d2d2d2" stroke-width="1.4"/><line x1="1237.9" y1="901.3" x2="1237.9" y2="854.6" stroke="#d2d2d2" stroke-width="1.4"/><line x1="1242.5" y1="901.3" x2="1242.5" y2="892.7" stroke="#d2d2d2" stroke-width="1.4"/><line x1="1258.9" y1="901.3" x2="1258.9" y2="887" stroke="#d2d2d2" stroke-width="1.4"/><line x1="1263.5" y1="901.3" x2="1263.5" y2="892.7" stroke="#d2d2d2" stroke-width="1.4"/><line x1="1290.7" y1="901.3" x2="1290.7" y2="871" stroke="#d2d2d2" stroke-width="1.4"/><line x1="1301.7" y1="901.3" x2="1301.7" y2="891.5" stroke="#d2d2d2" stroke-width="1.4"/><line x1="1310.9" y1="901.3" x2="1310.9" y2="867.8" stroke="#d2d2d2" stroke-width="1.4"/><line x1="1319" y1="901.3" x2="1319" y2="882.3" stroke="#d2d2d2" stroke-width="1.4"/><line x1="1322.8" y1="901.3" x2="1322.8" y2="857.4" stroke="#d2d2d2" stroke-width="1.4"/><line x1="1325.7" y1="901.3" x2="1325.7" y2="891.5" stroke="#d2d2d2" stroke-width="1.4"/><line x1="1330" y1="901.3" x2="1330" y2="861.2" stroke="#d2d2d2" stroke-width="1.4"/><line x1="1331.2" y1="901.3" x2="1331.2" y2="884.3" stroke="#d2d2d2" stroke-width="1.4"/><line x1="1334.9" y1="901.3" x2="1334.9" y2="763.7" stroke="#d2d2d2" stroke-width="1.4"/><line x1="1352.3" y1="901.3" x2="1352.3" y2="883.7" stroke="#d2d2d2" stroke-width="1.4"/><line x1="1352.9" y1="901.3" x2="1352.9" y2="852.5" stroke="#d2d2d2" stroke-width="1.4"/><line x1="1356.9" y1="901.3" x2="1356.9" y2="860.3" stroke="#d2d2d2" stroke-width="1.4"/><line x1="1381.2" y1="901.3" x2="1381.2" y2="893" stroke="#d2d2d2" stroke-width="1.4"/><line x1="1383.5" y1="901.3" x2="1383.5" y2="887.2" stroke="#d2d2d2" stroke-width="1.4"/><line x1="1414.5" y1="901.3" x2="1414.5" y2="488" stroke="#d2d2d2" stroke-width="1.6"/><line x1="1455.8" y1="901.3" x2="1455.8" y2="863.2" stroke="#d2d2d2" stroke-width="1.4"/><line x1="1462.7" y1="901.3" x2="1462.7" y2="882.3" stroke="#d2d2d2" stroke-width="1.4"/><line x1="1471.7" y1="901.3" x2="1471.7" y2="865" stroke="#d2d2d2" stroke-width="1.4"/><line x1="1497.4" y1="901.3" x2="1497.4" y2="883.4" stroke="#d2d2d2" stroke-width="1.4"/><line x1="1500.3" y1="901.3" x2="1500.3" y2="883.4" stroke="#d2d2d2" stroke-width="1.4"/><line x1="1506.9" y1="901.3" x2="1506.9" y2="881.4" stroke="#d2d2d2" stroke-width="1.4"/><line x1="1518.8" y1="901.3" x2="1518.8" y2="864" stroke="#d2d2d2" stroke-width="1.4"/><line x1="1541" y1="901.3" x2="1541" y2="890" stroke="#d2d2d2" stroke-width="1.4"/><line x1="1550" y1="901.3" x2="1550" y2="863.2" stroke="#d2d2d2" stroke-width="1.4"/><line x1="1603.8" y1="901.3" x2="1603.8" y2="888" stroke="#d2d2d2" stroke-width="1.4"/><line x1="1613" y1="901.3" x2="1613" y2="867.8" stroke="#d2d2d2" stroke-width="1.4"/><line x1="1661" y1="901.3" x2="1661" y2="882.3" stroke="#d2d2d2" stroke-width="1.4"/><line x1="1727.5" y1="901.3" x2="1727.5" y2="883.4" stroke="#d2d2d2" stroke-width="1.4"/><line x1="1731" y1="901.3" x2="1731" y2="881.4" stroke="#d2d2d2" stroke-width="1.4"/><line x1="1030.8" y1="901.3" x2="1030.8" y2="798.8" stroke="#f04848" stroke-width="1.8"/><line x1="1030.8" y1="798.8" x2="1030.8" y2="742.8" stroke="#a0a0a0" stroke-width="1.8" stroke-dasharray="2.6,4.5"/><path d="M1026.8 739.3 L1034.8 739.3 L1030.8 743.3 Z" fill="#a0a0a0"/><line x1="1048.7" y1="901.3" x2="1048.7" y2="854.6" stroke="#f04848" stroke-width="1.8"/><line x1="1048.7" y1="854.6" x2="1048.7" y2="828.8" stroke="#000" stroke-width="1.8" stroke-dasharray="2.6,4.5"/><path d="M1044.7 825.3 L1052.7 825.3 L1048.7 829.3 Z" fill="#000"/><line x1="1098.8" y1="901.3" x2="1098.8" y2="779" stroke="#f04848" stroke-width="1.8"/><line x1="1098.8" y1="779" x2="1098.8" y2="716.4" stroke="#000" stroke-width="1.8" stroke-dasharray="2.6,4.5"/><path d="M1094.8 712.9 L1102.8 712.9 L1098.8 716.9 Z" fill="#000"/><line x1="1102.9" y1="901.3" x2="1102.9" y2="824.7" stroke="#f04848" stroke-width="1.8"/><line x1="1102.9" y1="824.7" x2="1102.9" y2="782.3" stroke="#2020ff" stroke-width="1.8" stroke-dasharray="2.6,4.5"/><path d="M1098.9 778.8 L1106.9 778.8 L1102.9 782.8 Z" fill="#2020ff"/><line x1="1133.9" y1="901.3" x2="1133.9" y2="818.7" stroke="#f04848" stroke-width="1.8"/><line x1="1133.9" y1="818.7" x2="1133.9" y2="773.6" stroke="#000" stroke-width="1.8" stroke-dasharray="2.6,4.5"/><path d="M1129.9 770.1 L1137.9 770.1 L1133.9 774.1 Z" fill="#000"/><line x1="1167.7" y1="901.3" x2="1167.7" y2="779" stroke="#f04848" stroke-width="1.8"/><line x1="1167.7" y1="779" x2="1167.7" y2="713.7" stroke="#000" stroke-width="1.8" stroke-dasharray="2.6,4.5"/><path d="M1163.7 710.2 L1171.7 710.2 L1167.7 714.2 Z" fill="#000"/><line x1="1204.7" y1="901.3" x2="1204.7" y2="768" stroke="#f04848" stroke-width="1.8"/><line x1="1204.7" y1="768" x2="1204.7" y2="697.4" stroke="#2020ff" stroke-width="1.8" stroke-dasharray="2.6,4.5"/><path d="M1200.7 693.9 L1208.7 693.9 L1204.7 697.9 Z" fill="#2020ff"/><line x1="1246.6" y1="901.3" x2="1246.6" y2="845.9" stroke="#f04848" stroke-width="1.8"/><line x1="1246.6" y1="845.9" x2="1246.6" y2="815" stroke="#2020ff" stroke-width="1.8" stroke-dasharray="2.6,4.5"/><path d="M1242.6 811.5 L1250.6 811.5 L1246.6 815.5 Z" fill="#2020ff"/><line x1="1374" y1="901.3" x2="1374" y2="850.5" stroke="#f04848" stroke-width="1.8"/><line x1="1374" y1="850.5" x2="1374" y2="821.8" stroke="#2020ff" stroke-width="1.8" stroke-dasharray="2.6,4.5"/><path d="M1370 818.3 L1378 818.3 L1374 822.3 Z" fill="#2020ff"/><line x1="1406.6" y1="901.3" x2="1406.6" y2="802.5" stroke="#f04848" stroke-width="1.8"/><line x1="1406.6" y1="802.5" x2="1406.6" y2="750.7" stroke="#000" stroke-width="1.8" stroke-dasharray="2.6,4.5"/><path d="M1402.6 747.2 L1410.6 747.2 L1406.6 751.2 Z" fill="#000"/><line x1="1410" y1="901.3" x2="1410" y2="833.7" stroke="#f04848" stroke-width="1.8"/><line x1="1410" y1="833.7" x2="1410" y2="796.7" stroke="#a0a0a0" stroke-width="1.8" stroke-dasharray="2.6,4.5"/><path d="M1406 793.2 L1414 793.2 L1410 797.2 Z" fill="#a0a0a0"/><line x1="1422.8" y1="901.3" x2="1422.8" y2="814.3" stroke="#f04848" stroke-width="1.8"/><line x1="1422.8" y1="814.3" x2="1422.8" y2="768.6" stroke="#2020ff" stroke-width="1.8" stroke-dasharray="2.6,4.5"/><path d="M1418.8 765.1 L1426.8 765.1 L1422.8 769.1 Z" fill="#2020ff"/><line x1="1582.1" y1="901.3" x2="1582.1" y2="833.7" stroke="#f04848" stroke-width="1.8"/><line x1="1582.1" y1="833.7" x2="1582.1" y2="796.7" stroke="#000" stroke-width="1.8" stroke-dasharray="2.6,4.5"/><path d="M1578.1 793.2 L1586.1 793.2 L1582.1 797.2 Z" fill="#000"/><line x1="1624.9" y1="901.3" x2="1624.9" y2="754.8" stroke="#f04848" stroke-width="1.8"/><line x1="1624.9" y1="754.8" x2="1624.9" y2="678.7" stroke="#000" stroke-width="1.8" stroke-dasharray="2.6,4.5"/><path d="M1620.9 675.2 L1628.9 675.2 L1624.9 679.2 Z" fill="#000"/><line x1="1692" y1="901.3" x2="1692" y2="841.5" stroke="#f04848" stroke-width="1.8"/><line x1="1692" y1="841.5" x2="1692" y2="808.8" stroke="#000" stroke-width="1.8" stroke-dasharray="2.6,4.5"/><path d="M1688 805.3 L1696 805.3 L1692 809.3 Z" fill="#000"/></svg>
<div style="position:absolute;left:1024.8px;top:720.8px;font-size:12px;line-height:14px;color:#a0a0a0;white-space:pre">iH<span style="font-size:9px;position:relative;top:4px"></span></div>
<div style="position:absolute;left:1042.2px;top:806.8px;font-size:12px;line-height:14px;color:#000;white-space:pre">y<span style="font-size:9px;position:relative;top:4px">1</span></div>
<div style="position:absolute;left:1092.3px;top:694.4px;font-size:12px;line-height:14px;color:#000;white-space:pre">y<span style="font-size:9px;position:relative;top:4px">2</span></div>
<div style="position:absolute;left:1096.4px;top:760.3px;font-size:12px;line-height:14px;color:#2020ff;white-space:pre">b<span style="font-size:9px;position:relative;top:4px">3</span></div>
<div style="position:absolute;left:1127.4px;top:751.6px;font-size:12px;line-height:14px;color:#000;white-space:pre">y<span style="font-size:9px;position:relative;top:4px">3</span></div>
<div style="position:absolute;left:1161.2px;top:691.7px;font-size:12px;line-height:14px;color:#000;white-space:pre">y<span style="font-size:9px;position:relative;top:4px">4</span></div>
<div style="position:absolute;left:1198.2px;top:675.4px;font-size:12px;line-height:14px;color:#2020ff;white-space:pre">b<span style="font-size:9px;position:relative;top:4px">5</span></div>
<div style="position:absolute;left:1240.1px;top:793.0px;font-size:12px;line-height:14px;color:#2020ff;white-space:pre">b<span style="font-size:9px;position:relative;top:4px">6</span></div>
<div style="position:absolute;left:1367.5px;top:799.8px;font-size:12px;line-height:14px;color:#2020ff;white-space:pre">b<span style="font-size:9px;position:relative;top:4px">8</span></div>
<div style="position:absolute;left:1400.1px;top:728.7px;font-size:12px;line-height:14px;color:#000;white-space:pre">y<span style="font-size:9px;position:relative;top:4px">9</span></div>
<div style="position:absolute;left:1373.0px;top:774.7px;font-size:12px;line-height:14px;color:#a0a0a0;white-space:pre">Prec-++-NH<span style="font-size:9px;position:relative;top:4px">3</span></div>
<div style="position:absolute;left:1416.3px;top:746.6px;font-size:12px;line-height:14px;color:#2020ff;white-space:pre">b<span style="font-size:9px;position:relative;top:4px">9</span></div>
<div style="position:absolute;left:1572.6px;top:774.7px;font-size:12px;line-height:14px;color:#000;white-space:pre">y<span style="font-size:9px;position:relative;top:4px">12</span></div>
<div style="position:absolute;left:1615.4px;top:656.7px;font-size:12px;line-height:14px;color:#000;white-space:pre">y<span style="font-size:9px;position:relative;top:4px">13</span></div>
<div style="position:absolute;left:1682.5px;top:786.8px;font-size:12px;line-height:14px;color:#000;white-space:pre">y<span style="font-size:9px;position:relative;top:4px">14</span></div>
<div style="position:absolute;left:570.5px;width:400px;top:896.3px;height:13px;line-height:13px;font-size:9.6px;color:#000;font-weight:normal;text-align:right;white-space:pre;letter-spacing:-0.35px;">0</div>
<div style="position:absolute;left:570.5px;width:400px;top:868.74px;height:13px;line-height:13px;font-size:9.6px;color:#000;font-weight:normal;text-align:right;white-space:pre;letter-spacing:-0.35px;">2 500</div>
<div style="position:absolute;left:570.5px;width:400px;top:841.18px;height:13px;line-height:13px;font-size:9.6px;color:#000;font-weight:normal;text-align:right;white-space:pre;letter-spacing:-0.35px;">5 000</div>
<div style="position:absolute;left:570.5px;width:400px;top:813.62px;height:13px;line-height:13px;font-size:9.6px;color:#000;font-weight:normal;text-align:right;white-space:pre;letter-spacing:-0.35px;">7 500</div>
<div style="position:absolute;left:570.5px;width:400px;top:786.06px;height:13px;line-height:13px;font-size:9.6px;color:#000;font-weight:normal;text-align:right;white-space:pre;letter-spacing:-0.35px;">10 000</div>
<div style="position:absolute;left:570.5px;width:400px;top:758.5px;height:13px;line-height:13px;font-size:9.6px;color:#000;font-weight:normal;text-align:right;white-space:pre;letter-spacing:-0.35px;">12 500</div>
<div style="position:absolute;left:570.5px;width:400px;top:730.9399999999999px;height:13px;line-height:13px;font-size:9.6px;color:#000;font-weight:normal;text-align:right;white-space:pre;letter-spacing:-0.35px;">15 000</div>
<div style="position:absolute;left:570.5px;width:400px;top:703.38px;height:13px;line-height:13px;font-size:9.6px;color:#000;font-weight:normal;text-align:right;white-space:pre;letter-spacing:-0.35px;">17 500</div>
<div style="position:absolute;left:570.5px;width:400px;top:675.8199999999999px;height:13px;line-height:13px;font-size:9.6px;color:#000;font-weight:normal;text-align:right;white-space:pre;letter-spacing:-0.35px;">20 000</div>
<div style="position:absolute;left:570.5px;width:400px;top:648.26px;height:13px;line-height:13px;font-size:9.6px;color:#000;font-weight:normal;text-align:right;white-space:pre;letter-spacing:-0.35px;">22 500</div>
<div style="position:absolute;left:570.5px;width:400px;top:620.7px;height:13px;line-height:13px;font-size:9.6px;color:#000;font-weight:normal;text-align:right;white-space:pre;letter-spacing:-0.35px;">25 000</div>
<div style="position:absolute;left:570.5px;width:400px;top:593.14px;height:13px;line-height:13px;font-size:9.6px;color:#000;font-weight:normal;text-align:right;white-space:pre;letter-spacing:-0.35px;">27 500</div>
<div style="position:absolute;left:570.5px;width:400px;top:565.5799999999999px;height:13px;line-height:13px;font-size:9.6px;color:#000;font-weight:normal;text-align:right;white-space:pre;letter-spacing:-0.35px;">30 000</div>
<div style="position:absolute;left:570.5px;width:400px;top:538.02px;height:13px;line-height:13px;font-size:9.6px;color:#000;font-weight:normal;text-align:right;white-space:pre;letter-spacing:-0.35px;">32 500</div>
<div style="position:absolute;left:570.5px;width:400px;top:510.46000000000004px;height:13px;line-height:13px;font-size:9.6px;color:#000;font-weight:normal;text-align:right;white-space:pre;letter-spacing:-0.35px;">35 000</div>
<div style="position:absolute;left:570.5px;width:400px;top:482.9px;height:13px;line-height:13px;font-size:9.6px;color:#000;font-weight:normal;text-align:right;white-space:pre;letter-spacing:-0.35px;">37 500</div>
<div style="position:absolute;left:570.5px;width:400px;top:455.34px;height:13px;line-height:13px;font-size:9.6px;color:#000;font-weight:normal;text-align:right;white-space:pre;letter-spacing:-0.35px;">40 000</div>
<div style="position:absolute;left:676.6px;width:600px;top:909px;height:14px;line-height:14px;font-size:12px;color:#000;font-weight:normal;text-align:center;white-space:pre;">0</div>
<div style="position:absolute;left:725.6400000000001px;width:600px;top:909px;height:14px;line-height:14px;font-size:12px;color:#000;font-weight:normal;text-align:center;white-space:pre;">100</div>
<div style="position:absolute;left:774.6800000000001px;width:600px;top:909px;height:14px;line-height:14px;font-size:12px;color:#000;font-weight:normal;text-align:center;white-space:pre;">200</div>
<div style="position:absolute;left:823.72px;width:600px;top:909px;height:14px;line-height:14px;font-size:12px;color:#000;font-weight:normal;text-align:center;white-space:pre;">300</div>
<div style="position:absolute;left:872.76px;width:600px;top:909px;height:14px;line-height:14px;font-size:12px;color:#000;font-weight:normal;text-align:center;white-space:pre;">400</div>
<div style="position:absolute;left:921.8px;width:600px;top:909px;height:14px;line-height:14px;font-size:12px;color:#000;font-weight:normal;text-align:center;white-space:pre;">500</div>
<div style="position:absolute;left:970.8400000000001px;width:600px;top:909px;height:14px;line-height:14px;font-size:12px;color:#000;font-weight:normal;text-align:center;white-space:pre;">600</div>
<div style="position:absolute;left:1019.8800000000001px;width:600px;top:909px;height:14px;line-height:14px;font-size:12px;color:#000;font-weight:normal;text-align:center;white-space:pre;">700</div>
<div style="position:absolute;left:1068.92px;width:600px;top:909px;height:14px;line-height:14px;font-size:12px;color:#000;font-weight:normal;text-align:center;white-space:pre;">800</div>
<div style="position:absolute;left:1117.96px;width:600px;top:909px;height:14px;line-height:14px;font-size:12px;color:#000;font-weight:normal;text-align:center;white-space:pre;">900</div>
<div style="position:absolute;left:1167.0px;width:600px;top:909px;height:14px;line-height:14px;font-size:12px;color:#000;font-weight:normal;text-align:center;white-space:pre;">1 000</div>
<div style="position:absolute;left:1216.04px;width:600px;top:909px;height:14px;line-height:14px;font-size:12px;color:#000;font-weight:normal;text-align:center;white-space:pre;">1 100</div>
<div style="position:absolute;left:1265.08px;width:600px;top:909px;height:14px;line-height:14px;font-size:12px;color:#000;font-weight:normal;text-align:center;white-space:pre;">1 200</div>
<div style="position:absolute;left:1314.12px;width:600px;top:909px;height:14px;line-height:14px;font-size:12px;color:#000;font-weight:normal;text-align:center;white-space:pre;">1 300</div>
<div style="position:absolute;left:1363.16px;width:600px;top:909px;height:14px;line-height:14px;font-size:12px;color:#000;font-weight:normal;text-align:center;white-space:pre;">1 400</div>
<div style="position:absolute;left:1412.2px;width:600px;top:909px;height:14px;line-height:14px;font-size:12px;color:#000;font-weight:normal;text-align:center;white-space:pre;">1 500</div>
<div style="position:absolute;left:964px;top:412px;height:14px;line-height:14px;font-size:12px;color:#000;font-weight:normal;white-space:pre;">Int</div>
<div style="position:absolute;left:1772px;top:895px;height:14px;line-height:14px;font-size:12px;color:#000;font-weight:normal;white-space:pre;">m/z</div>
<div style="position:absolute;left:943px;top:943px;width:445px;height:22px;background:linear-gradient(#f7f8fa,#e4e7ec 60%,#dadee4);border:1px solid #8d939c;"></div>
<div style="position:absolute;left:949.4px;top:949px;width:1px;height:11px;background:#a0a0a0;"></div>
<div style="position:absolute;left:994px;top:949px;width:1px;height:11px;background:#a0a0a0;"></div>
<div style="position:absolute;left:1043.8px;top:949px;width:1px;height:11px;background:#a0a0a0;"></div>
<div style="position:absolute;left:1092px;top:949px;width:1px;height:11px;background:#a0a0a0;"></div>
<div style="position:absolute;left:1152px;top:949px;width:1px;height:11px;background:#a0a0a0;"></div>
<div style="position:absolute;left:1218px;top:949px;width:1px;height:11px;background:#a0a0a0;"></div>
<div style="position:absolute;left:1282px;top:949px;width:1px;height:11px;background:#a0a0a0;"></div>
<div style="position:absolute;left:1335.5px;top:949px;width:1px;height:11px;background:#a0a0a0;"></div>
<div style="position:absolute;left:1381.8px;top:949px;width:1px;height:11px;background:#a0a0a0;"></div>
<div style="position:absolute;left:959.5px;top:947px;height:14px;line-height:14px;font-size:12px;color:#222;font-weight:normal;white-space:pre;letter-spacing:-0.2px;">Ions</div>
<div style="position:absolute;left:1003.6px;top:947px;height:14px;line-height:14px;font-size:12px;color:#222;font-weight:normal;white-space:pre;letter-spacing:-0.2px;">Other</div>
<div style="position:absolute;left:1053px;top:947px;height:14px;line-height:14px;font-size:12px;color:#222;font-weight:normal;white-space:pre;letter-spacing:-0.2px;">Loss</div>
<div style="position:absolute;left:1101.5px;top:947px;height:14px;line-height:14px;font-size:12px;color:#222;font-weight:normal;white-space:pre;letter-spacing:-0.2px;">Charge</div>
<div style="position:absolute;left:1161.4px;top:947px;height:14px;line-height:14px;font-size:12px;color:#222;font-weight:normal;white-space:pre;letter-spacing:-0.2px;">De Novo</div>
<div style="position:absolute;left:1227.6px;top:947px;height:14px;line-height:14px;font-size:12px;color:#222;font-weight:normal;white-space:pre;letter-spacing:-0.2px;">Settings</div>
<div style="position:absolute;left:1291.6px;top:947px;height:14px;line-height:14px;font-size:12px;color:#222;font-weight:normal;white-space:pre;letter-spacing:-0.2px;">Export</div>
<div style="position:absolute;left:1346px;top:947px;height:14px;line-height:14px;font-size:12px;color:#222;font-weight:normal;white-space:pre;letter-spacing:-0.2px;">Help</div>
<div style="position:absolute;left:28px;top:995px;height:14px;line-height:14px;font-size:12px;color:#222;font-weight:bold;white-space:pre;">Spectrum Identification Overview</div>
<svg style="position:absolute;left:1778px;top:997px" width="32" height="11" viewBox="0 0 32 11"><path d="M13.5 7.2 L17.5 0.2 L21.5 7.2 Z" fill="#b4b4b4"/><rect x="16.8" y="5" width="1.4" height="5.5" fill="#b4b4b4"/></svg>
<div style="position:absolute;left:1803px;top:995px;font-size:12px;line-height:14px;color:#b4b4b4;font-weight:bold">?</div>
<div style="position:absolute;left:16px;top:1010px;width:1801px;height:143px;border:1px solid #a4a7ab;border-color:#a9abae #bcbec2 #c9cbce #c0c2c6;border-radius:6px;box-shadow:inset 1px 1px 2px rgba(0,0,0,0.16),inset -1px -1px 1.5px rgba(0,0,0,0.07);background:#fff;"></div>
<svg style="position:absolute;left:0;top:0" width="1936" height="1176"><line x1="80.4" y1="1032" x2="80.4" y2="1127" stroke="#999" stroke-width="1.5"/><line x1="83.9" y1="1129" x2="402" y2="1129" stroke="#bbb" stroke-width="2"/><rect x="99.4" y="1057.5" width="37" height="69.5" fill="#ff99ff"/><rect x="149.15" y="1060.1" width="37" height="66.9" fill="#9999ff"/><rect x="198.9" y="1046.7" width="37" height="80.3" fill="#99ffff"/><rect x="248.65" y="1056.0" width="37" height="71.0" fill="#d6bcd6"/><rect x="298.4" y="1066.1" width="37" height="60.9" fill="#cc5c5c"/><rect x="348.15" y="1044.7" width="37" height="82.3" fill="#6cc35f"/><line x1="77.4" y1="1127.0" x2="80.4" y2="1127.0" stroke="#999" stroke-width="1"/><line x1="77.4" y1="1110.8" x2="80.4" y2="1110.8" stroke="#999" stroke-width="1"/><line x1="77.4" y1="1094.5" x2="80.4" y2="1094.5" stroke="#999" stroke-width="1"/><line x1="77.4" y1="1078.2" x2="80.4" y2="1078.2" stroke="#999" stroke-width="1"/><line x1="77.4" y1="1062.0" x2="80.4" y2="1062.0" stroke="#999" stroke-width="1"/><line x1="77.4" y1="1045.8" x2="80.4" y2="1045.8" stroke="#999" stroke-width="1"/><line x1="450.4" y1="1032" x2="450.4" y2="1127" stroke="#999" stroke-width="1.5"/><line x1="453.9" y1="1129" x2="784" y2="1129" stroke="#bbb" stroke-width="2"/><rect x="471.0" y="1126.3" width="38" height="0.7" fill="#ff99ff"/><rect x="522.7" y="1125.4" width="38" height="1.6" fill="#9999ff"/><rect x="574.4" y="1045.0" width="38" height="82.0" fill="#99ffff"/><rect x="626.1" y="1125.9" width="38" height="1.1" fill="#d6bcd6"/><rect x="677.8" y="1123.0" width="38" height="4.0" fill="#cc5c5c"/><rect x="729.5" y="1127.0" width="38" height="0.0" fill="#6cc35f"/><line x1="447.4" y1="1127.0" x2="450.4" y2="1127.0" stroke="#999" stroke-width="1"/><line x1="447.4" y1="1112.7" x2="450.4" y2="1112.7" stroke="#999" stroke-width="1"/><line x1="447.4" y1="1098.3" x2="450.4" y2="1098.3" stroke="#999" stroke-width="1"/><line x1="447.4" y1="1084.0" x2="450.4" y2="1084.0" stroke="#999" stroke-width="1"/><line x1="447.4" y1="1069.7" x2="450.4" y2="1069.7" stroke="#999" stroke-width="1"/><line x1="447.4" y1="1055.3" x2="450.4" y2="1055.3" stroke="#999" stroke-width="1"/><line x1="447.4" y1="1041.0" x2="450.4" y2="1041.0" stroke="#999" stroke-width="1"/><line x1="844" y1="1032" x2="844" y2="1127" stroke="#999" stroke-width="1.5"/><line x1="847.5" y1="1129" x2="1165.5" y2="1129" stroke="#bbb" stroke-width="2"/><rect x="863.5" y="1050.5" width="37" height="76.5" fill="#ff99ff"/><rect x="913.3" y="1048.7" width="37" height="78.3" fill="#9999ff"/><rect x="963.1" y="1057.7" width="37" height="69.3" fill="#99ffff"/><rect x="1012.9" y="1051.5" width="37" height="75.5" fill="#d6bcd6"/><rect x="1062.7" y="1044.7" width="37" height="82.3" fill="#cc5c5c"/><rect x="1112.5" y="1059.0" width="37" height="68.0" fill="#6cc35f"/><line x1="841" y1="1127.0" x2="844" y2="1127.0" stroke="#999" stroke-width="1"/><line x1="841" y1="1116.2" x2="844" y2="1116.2" stroke="#999" stroke-width="1"/><line x1="841" y1="1105.3" x2="844" y2="1105.3" stroke="#999" stroke-width="1"/><line x1="841" y1="1094.5" x2="844" y2="1094.5" stroke="#999" stroke-width="1"/><line x1="841" y1="1083.6" x2="844" y2="1083.6" stroke="#999" stroke-width="1"/><line x1="841" y1="1072.8" x2="844" y2="1072.8" stroke="#999" stroke-width="1"/><line x1="841" y1="1061.9" x2="844" y2="1061.9" stroke="#999" stroke-width="1"/><line x1="841" y1="1051.0" x2="844" y2="1051.0" stroke="#999" stroke-width="1"/><line x1="841" y1="1040.2" x2="844" y2="1040.2" stroke="#999" stroke-width="1"/><line x1="1207.7" y1="1032" x2="1207.7" y2="1127" stroke="#999" stroke-width="1.5"/><line x1="1211.2" y1="1129" x2="1547.4" y2="1129" stroke="#bbb" stroke-width="2"/><rect x="1228.3" y="1057.8" width="39" height="69.2" fill="#ff99ff"/><rect x="1280.96" y="1060.4" width="39" height="66.6" fill="#9999ff"/><rect x="1333.62" y="1047.0" width="39" height="80.0" fill="#99ffff"/><rect x="1386.28" y="1056.1" width="39" height="70.9" fill="#d6bcd6"/><rect x="1438.94" y="1066.2" width="39" height="60.8" fill="#cc5c5c"/><rect x="1491.6" y="1044.9" width="39" height="82.1" fill="#6cc35f"/><line x1="1204.7" y1="1127.0" x2="1207.7" y2="1127.0" stroke="#999" stroke-width="1"/><line x1="1204.7" y1="1108.6" x2="1207.7" y2="1108.6" stroke="#999" stroke-width="1"/><line x1="1204.7" y1="1090.3" x2="1207.7" y2="1090.3" stroke="#999" stroke-width="1"/><line x1="1204.7" y1="1071.9" x2="1207.7" y2="1071.9" stroke="#999" stroke-width="1"/><line x1="1204.7" y1="1053.6" x2="1207.7" y2="1053.6" stroke="#999" stroke-width="1"/><line x1="1204.7" y1="1035.2" x2="1207.7" y2="1035.2" stroke="#999" stroke-width="1"/><circle cx="1647.5" cy="1086" r="45" fill="#aee8ea"/><circle cx="1643.4" cy="1087" r="41" fill="#7fb0e0" stroke="#c98fb0" stroke-width="0.6"/></svg>
<div style="position:absolute;left:-182.1px;width:600px;top:1045.49875px;height:10px;line-height:10px;font-size:9px;color:#333;font-weight:normal;text-align:center;white-space:pre;letter-spacing:0.8px;transform:scaleY(0.85);">4 277</div>
<div style="position:absolute;left:-132.35px;width:600px;top:1048.115px;height:10px;line-height:10px;font-size:9px;color:#333;font-weight:normal;text-align:center;white-space:pre;letter-spacing:0.8px;transform:scaleY(0.85);">4 116</div>
<div style="position:absolute;left:-82.6px;width:600px;top:1034.6925px;height:10px;line-height:10px;font-size:9px;color:#333;font-weight:normal;text-align:center;white-space:pre;letter-spacing:0.8px;transform:scaleY(0.85);">4 942</div>
<div style="position:absolute;left:-32.85000000000002px;width:600px;top:1043.9875px;height:10px;line-height:10px;font-size:9px;color:#333;font-weight:normal;text-align:center;white-space:pre;letter-spacing:0.8px;transform:scaleY(0.85);">4 370</div>
<div style="position:absolute;left:16.899999999999977px;width:600px;top:1054.0625px;height:10px;line-height:10px;font-size:9px;color:#333;font-weight:normal;text-align:center;white-space:pre;letter-spacing:0.8px;transform:scaleY(0.85);">3 750</div>
<div style="position:absolute;left:66.64999999999998px;width:600px;top:1032.69375px;height:10px;line-height:10px;font-size:9px;color:#333;font-weight:normal;text-align:center;white-space:pre;letter-spacing:0.8px;transform:scaleY(0.85);">5 065</div>
<div style="position:absolute;left:-326.6px;width:400px;top:1121.5px;height:11px;line-height:11px;font-size:8.2px;color:#505050;font-weight:normal;text-align:right;white-space:pre;transform:scaleX(1.38);transform-origin:100% 50%;letter-spacing:0.2px;">0</div>
<div style="position:absolute;left:-326.6px;width:400px;top:1105.25px;height:11px;line-height:11px;font-size:8.2px;color:#505050;font-weight:normal;text-align:right;white-space:pre;transform:scaleX(1.38);transform-origin:100% 50%;letter-spacing:0.2px;">1 000</div>
<div style="position:absolute;left:-326.6px;width:400px;top:1089.0px;height:11px;line-height:11px;font-size:8.2px;color:#505050;font-weight:normal;text-align:right;white-space:pre;transform:scaleX(1.38);transform-origin:100% 50%;letter-spacing:0.2px;">2 000</div>
<div style="position:absolute;left:-326.6px;width:400px;top:1072.75px;height:11px;line-height:11px;font-size:8.2px;color:#505050;font-weight:normal;text-align:right;white-space:pre;transform:scaleX(1.38);transform-origin:100% 50%;letter-spacing:0.2px;">3 000</div>
<div style="position:absolute;left:-326.6px;width:400px;top:1056.5px;height:11px;line-height:11px;font-size:8.2px;color:#505050;font-weight:normal;text-align:right;white-space:pre;transform:scaleX(1.38);transform-origin:100% 50%;letter-spacing:0.2px;">4 000</div>
<div style="position:absolute;left:-326.6px;width:400px;top:1040.25px;height:11px;line-height:11px;font-size:8.2px;color:#505050;font-weight:normal;text-align:right;white-space:pre;transform:scaleX(1.38);transform-origin:100% 50%;letter-spacing:0.2px;">5 000</div>
<div style="position:absolute;left:-56px;width:600px;top:1131px;height:11px;line-height:11px;font-size:9.5px;color:#555;font-weight:normal;text-align:center;white-space:pre;letter-spacing:0.8px;">#PSMs</div>
<div style="position:absolute;left:190.0px;width:600px;top:1114.2835px;height:10px;line-height:10px;font-size:9px;color:#333;font-weight:normal;text-align:center;white-space:pre;letter-spacing:0.8px;transform:scaleY(0.85);">5</div>
<div style="position:absolute;left:241.70000000000005px;width:600px;top:1113.4237px;height:10px;line-height:10px;font-size:9px;color:#333;font-weight:normal;text-align:center;white-space:pre;letter-spacing:0.8px;transform:scaleY(0.85);">11</div>
<div style="position:absolute;left:293.4px;width:600px;top:1033.0324px;height:10px;line-height:10px;font-size:9px;color:#333;font-weight:normal;text-align:center;white-space:pre;letter-spacing:0.8px;transform:scaleY(0.85);">572</div>
<div style="position:absolute;left:345.1px;width:600px;top:1113.8536px;height:10px;line-height:10px;font-size:9px;color:#333;font-weight:normal;text-align:center;white-space:pre;letter-spacing:0.8px;transform:scaleY(0.85);">8</div>
<div style="position:absolute;left:396.79999999999995px;width:600px;top:1110.9876px;height:10px;line-height:10px;font-size:9px;color:#333;font-weight:normal;text-align:center;white-space:pre;letter-spacing:0.8px;transform:scaleY(0.85);">28</div>
<div style="position:absolute;left:448.5px;width:600px;top:1115.0px;height:10px;line-height:10px;font-size:9px;color:#333;font-weight:normal;text-align:center;white-space:pre;letter-spacing:0.8px;transform:scaleY(0.85);">0</div>
<div style="position:absolute;left:43.39999999999998px;width:400px;top:1121.5px;height:11px;line-height:11px;font-size:8.2px;color:#505050;font-weight:normal;text-align:right;white-space:pre;transform:scaleX(1.38);transform-origin:100% 50%;letter-spacing:0.2px;">0</div>
<div style="position:absolute;left:43.39999999999998px;width:400px;top:1107.17px;height:11px;line-height:11px;font-size:8.2px;color:#505050;font-weight:normal;text-align:right;white-space:pre;transform:scaleX(1.38);transform-origin:100% 50%;letter-spacing:0.2px;">100</div>
<div style="position:absolute;left:43.39999999999998px;width:400px;top:1092.84px;height:11px;line-height:11px;font-size:8.2px;color:#505050;font-weight:normal;text-align:right;white-space:pre;transform:scaleX(1.38);transform-origin:100% 50%;letter-spacing:0.2px;">200</div>
<div style="position:absolute;left:43.39999999999998px;width:400px;top:1078.51px;height:11px;line-height:11px;font-size:8.2px;color:#505050;font-weight:normal;text-align:right;white-space:pre;transform:scaleX(1.38);transform-origin:100% 50%;letter-spacing:0.2px;">300</div>
<div style="position:absolute;left:43.39999999999998px;width:400px;top:1064.18px;height:11px;line-height:11px;font-size:8.2px;color:#505050;font-weight:normal;text-align:right;white-space:pre;transform:scaleX(1.38);transform-origin:100% 50%;letter-spacing:0.2px;">400</div>
<div style="position:absolute;left:43.39999999999998px;width:400px;top:1049.85px;height:11px;line-height:11px;font-size:8.2px;color:#505050;font-weight:normal;text-align:right;white-space:pre;transform:scaleX(1.38);transform-origin:100% 50%;letter-spacing:0.2px;">500</div>
<div style="position:absolute;left:43.39999999999998px;width:400px;top:1035.52px;height:11px;line-height:11px;font-size:8.2px;color:#505050;font-weight:normal;text-align:right;white-space:pre;transform:scaleX(1.38);transform-origin:100% 50%;letter-spacing:0.2px;">600</div>
<div style="position:absolute;left:320px;width:600px;top:1131px;height:11px;line-height:11px;font-size:9.5px;color:#555;font-weight:normal;text-align:center;white-space:pre;letter-spacing:0.8px;">#Unique PSMs</div>
<div style="position:absolute;left:582.0px;width:600px;top:1038.45325px;height:10px;line-height:10px;font-size:9px;color:#333;font-weight:normal;text-align:center;white-space:pre;letter-spacing:0.8px;transform:scaleY(0.85);">7 055</div>
<div style="position:absolute;left:631.8px;width:600px;top:1036.7064px;height:10px;line-height:10px;font-size:9px;color:#333;font-weight:normal;text-align:center;white-space:pre;letter-spacing:0.8px;transform:scaleY(0.85);">7 216</div>
<div style="position:absolute;left:681.6px;width:600px;top:1045.6685px;height:10px;line-height:10px;font-size:9px;color:#333;font-weight:normal;text-align:center;white-space:pre;letter-spacing:0.8px;transform:scaleY(0.85);">6 390</div>
<div style="position:absolute;left:731.4000000000001px;width:600px;top:1039.4623px;height:10px;line-height:10px;font-size:9px;color:#333;font-weight:normal;text-align:center;white-space:pre;letter-spacing:0.8px;transform:scaleY(0.85);">6 962</div>
<div style="position:absolute;left:781.2px;width:600px;top:1032.7353px;height:10px;line-height:10px;font-size:9px;color:#333;font-weight:normal;text-align:center;white-space:pre;letter-spacing:0.8px;transform:scaleY(0.85);">7 582</div>
<div style="position:absolute;left:831.0px;width:600px;top:1047.00305px;height:10px;line-height:10px;font-size:9px;color:#333;font-weight:normal;text-align:center;white-space:pre;letter-spacing:0.8px;transform:scaleY(0.85);">6 267</div>
<div style="position:absolute;left:437px;width:400px;top:1121.5px;height:11px;line-height:11px;font-size:8.2px;color:#505050;font-weight:normal;text-align:right;white-space:pre;transform:scaleX(1.38);transform-origin:100% 50%;letter-spacing:0.2px;">0</div>
<div style="position:absolute;left:437px;width:400px;top:1110.65px;height:11px;line-height:11px;font-size:8.2px;color:#505050;font-weight:normal;text-align:right;white-space:pre;transform:scaleX(1.38);transform-origin:100% 50%;letter-spacing:0.2px;">1 000</div>
<div style="position:absolute;left:437px;width:400px;top:1099.8px;height:11px;line-height:11px;font-size:8.2px;color:#505050;font-weight:normal;text-align:right;white-space:pre;transform:scaleX(1.38);transform-origin:100% 50%;letter-spacing:0.2px;">2 000</div>
<div style="position:absolute;left:437px;width:400px;top:1088.95px;height:11px;line-height:11px;font-size:8.2px;color:#505050;font-weight:normal;text-align:right;white-space:pre;transform:scaleX(1.38);transform-origin:100% 50%;letter-spacing:0.2px;">3 000</div>
<div style="position:absolute;left:437px;width:400px;top:1078.1px;height:11px;line-height:11px;font-size:8.2px;color:#505050;font-weight:normal;text-align:right;white-space:pre;transform:scaleX(1.38);transform-origin:100% 50%;letter-spacing:0.2px;">4 000</div>
<div style="position:absolute;left:437px;width:400px;top:1067.25px;height:11px;line-height:11px;font-size:8.2px;color:#505050;font-weight:normal;text-align:right;white-space:pre;transform:scaleX(1.38);transform-origin:100% 50%;letter-spacing:0.2px;">5 000</div>
<div style="position:absolute;left:437px;width:400px;top:1056.4px;height:11px;line-height:11px;font-size:8.2px;color:#505050;font-weight:normal;text-align:right;white-space:pre;transform:scaleX(1.38);transform-origin:100% 50%;letter-spacing:0.2px;">6 000</div>
<div style="position:absolute;left:437px;width:400px;top:1045.55px;height:11px;line-height:11px;font-size:8.2px;color:#505050;font-weight:normal;text-align:right;white-space:pre;transform:scaleX(1.38);transform-origin:100% 50%;letter-spacing:0.2px;">7 000</div>
<div style="position:absolute;left:437px;width:400px;top:1034.7px;height:11px;line-height:11px;font-size:8.2px;color:#505050;font-weight:normal;text-align:right;white-space:pre;transform:scaleX(1.38);transform-origin:100% 50%;letter-spacing:0.2px;">8 000</div>
<div style="position:absolute;left:706px;width:600px;top:1131px;height:11px;line-height:11px;font-size:9.5px;color:#555;font-weight:normal;text-align:center;white-space:pre;letter-spacing:0.8px;">#Unassigned</div>
<div style="position:absolute;left:947.8px;width:600px;top:1045.7828px;height:10px;line-height:10px;font-size:9px;color:#333;font-weight:normal;text-align:center;white-space:pre;letter-spacing:0.8px;transform:scaleY(0.85);">37,7</div>
<div style="position:absolute;left:1000.46px;width:600px;top:1048.3532px;height:10px;line-height:10px;font-size:9px;color:#333;font-weight:normal;text-align:center;white-space:pre;letter-spacing:0.8px;transform:scaleY(0.85);">36,3</div>
<div style="position:absolute;left:1053.12px;width:600px;top:1034.9504px;height:10px;line-height:10px;font-size:9px;color:#333;font-weight:normal;text-align:center;white-space:pre;letter-spacing:0.8px;transform:scaleY(0.85);">43,6</div>
<div style="position:absolute;left:1105.78px;width:600px;top:1044.1304px;height:10px;line-height:10px;font-size:9px;color:#333;font-weight:normal;text-align:center;white-space:pre;letter-spacing:0.8px;transform:scaleY(0.85);">38,6</div>
<div style="position:absolute;left:1158.44px;width:600px;top:1054.2284px;height:10px;line-height:10px;font-size:9px;color:#333;font-weight:normal;text-align:center;white-space:pre;letter-spacing:0.8px;transform:scaleY(0.85);">33,1</div>
<div style="position:absolute;left:1211.1px;width:600px;top:1032.9308px;height:10px;line-height:10px;font-size:9px;color:#333;font-weight:normal;text-align:center;white-space:pre;letter-spacing:0.8px;transform:scaleY(0.85);">44,7</div>
<div style="position:absolute;left:800.7px;width:400px;top:1121.5px;height:11px;line-height:11px;font-size:8.2px;color:#505050;font-weight:normal;text-align:right;white-space:pre;transform:scaleX(1.38);transform-origin:100% 50%;letter-spacing:0.2px;">0</div>
<div style="position:absolute;left:800.7px;width:400px;top:1103.14px;height:11px;line-height:11px;font-size:8.2px;color:#505050;font-weight:normal;text-align:right;white-space:pre;transform:scaleX(1.38);transform-origin:100% 50%;letter-spacing:0.2px;">10</div>
<div style="position:absolute;left:800.7px;width:400px;top:1084.78px;height:11px;line-height:11px;font-size:8.2px;color:#505050;font-weight:normal;text-align:right;white-space:pre;transform:scaleX(1.38);transform-origin:100% 50%;letter-spacing:0.2px;">20</div>
<div style="position:absolute;left:800.7px;width:400px;top:1066.42px;height:11px;line-height:11px;font-size:8.2px;color:#505050;font-weight:normal;text-align:right;white-space:pre;transform:scaleX(1.38);transform-origin:100% 50%;letter-spacing:0.2px;">30</div>
<div style="position:absolute;left:800.7px;width:400px;top:1048.06px;height:11px;line-height:11px;font-size:8.2px;color:#505050;font-weight:normal;text-align:right;white-space:pre;transform:scaleX(1.38);transform-origin:100% 50%;letter-spacing:0.2px;">40</div>
<div style="position:absolute;left:800.7px;width:400px;top:1029.7px;height:11px;line-height:11px;font-size:8.2px;color:#505050;font-weight:normal;text-align:right;white-space:pre;transform:scaleX(1.38);transform-origin:100% 50%;letter-spacing:0.2px;">50</div>
<div style="position:absolute;left:1079px;width:600px;top:1131px;height:11px;line-height:11px;font-size:9.5px;color:#555;font-weight:normal;text-align:center;white-space:pre;letter-spacing:0.8px;">ID Rate (%)</div>
<div style="position:absolute;left:1704px;top:1062px;width:11px;height:12px;background:#ffb6c8;"></div>
<div style="position:absolute;left:1722px;top:1061px;height:14px;line-height:14px;font-size:11px;color:#777;font-weight:normal;white-space:pre;">Mascot</div>
<div style="position:absolute;left:1704px;top:1080px;width:11px;height:12px;background:#7a6ee8;"></div>
<div style="position:absolute;left:1722px;top:1079px;height:14px;line-height:14px;font-size:11px;color:#777;font-weight:normal;white-space:pre;">OMSSA</div>
<div style="position:absolute;left:1704px;top:1098px;width:11px;height:12px;background:#aee8ea;"></div>
<div style="position:absolute;left:1722px;top:1097px;height:14px;line-height:14px;font-size:11px;color:#777;font-weight:normal;white-space:pre;">X!Tandem</div>
</body></html>
